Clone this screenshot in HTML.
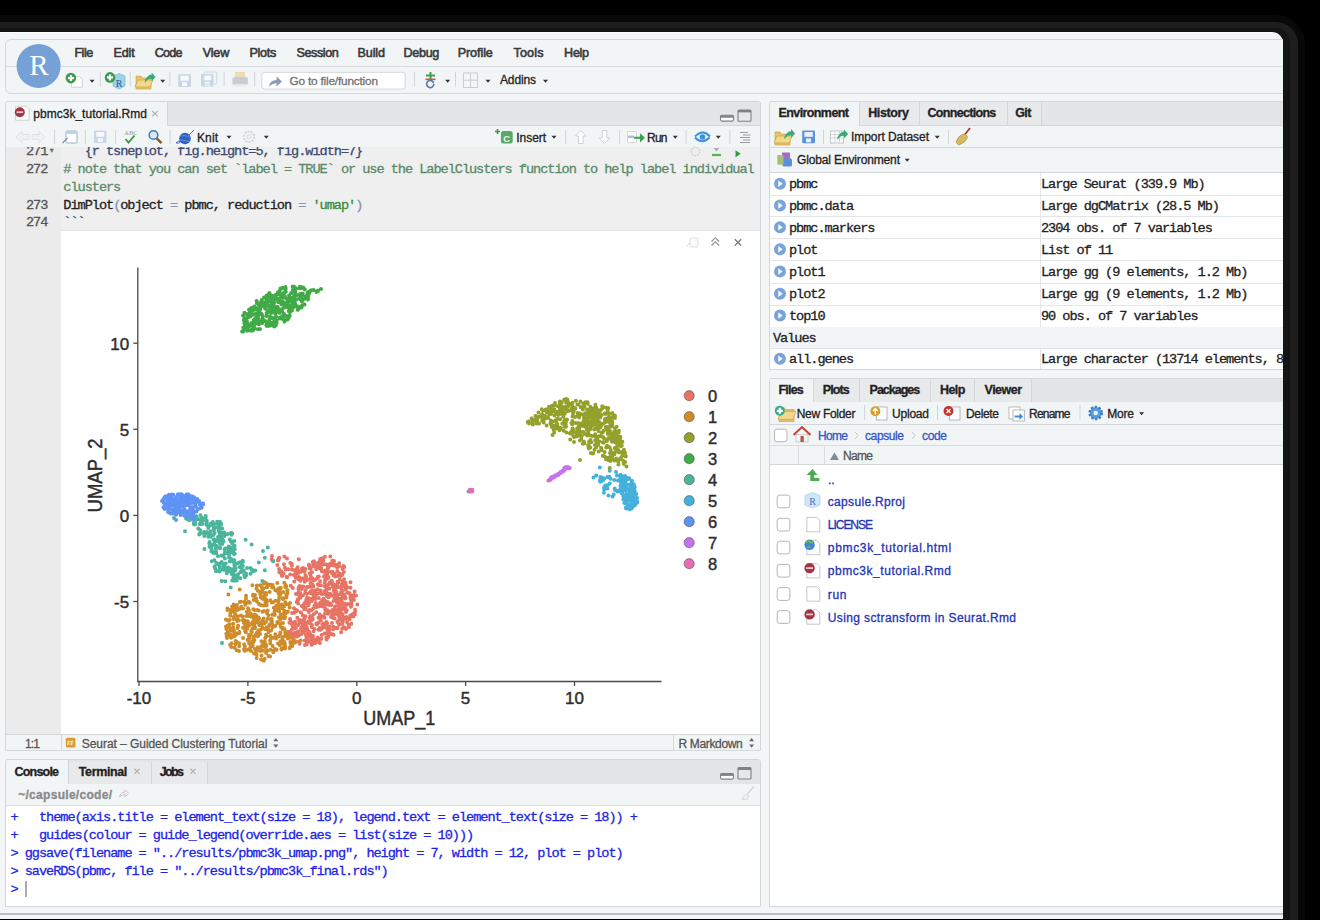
<!DOCTYPE html><html><head><meta charset="utf-8"><style>
html,body{margin:0;padding:0;}
body{width:1320px;height:920px;overflow:hidden;background:#000;position:relative;font-family:"Liberation Sans",sans-serif;}
.t{position:absolute;white-space:pre;-webkit-text-stroke:0.3px currentColor;}
.r{position:absolute;}
svg{position:absolute;overflow:visible;}
</style></head><body>
<div class="r" style="left:-40.00px;top:15.00px;width:1345.00px;height:945.00px;background:#080808;border-top-right-radius:30px;"></div>
<div class="r" style="left:-40.00px;top:21.50px;width:1338.00px;height:938.50px;background:#1e1e1e;border-top-right-radius:22px;"></div>
<div class="r" style="left:-40.00px;top:28.00px;width:1330.00px;height:932.00px;background:#141414;border-top-right-radius:15px;"></div>
<div class="r" style="left:0.00px;top:918.50px;width:1283.00px;height:41.50px;background:#000;"></div>
<div class="r" style="left:0.00px;top:32.00px;width:1283.00px;height:886.50px;background:#f3f5f7;border-top-right-radius:11px;"></div>
<div style="position:absolute;left:0;top:0;width:1283px;height:918.5px;overflow:hidden">
<div class="r" style="left:0.00px;top:32.00px;width:1272.00px;height:1.00px;background:#fdfdfd;"></div>
<div class="r" style="left:0.00px;top:913.00px;width:1283.00px;height:2.00px;background:#b7c1cf;"></div>
<div class="r" style="left:5.00px;top:39.00px;width:1295.00px;height:54.50px;background:#f2f5f6;border:1px solid #d3d7da;box-sizing:border-box;border-radius:6px;"></div>
<div class="r" style="left:6.00px;top:66.00px;width:1277.00px;height:1.00px;background:#dadde0;"></div>
<div class="r" style="left:5.00px;top:101.00px;width:756.00px;height:650.00px;background:#f2f5f6;border:1px solid #d3d7da;box-sizing:border-box;border-radius:3px 3px 0 0;"></div>
<div class="r" style="left:6.00px;top:102.00px;width:754.00px;height:23.00px;background:#e3e5e7;border-radius:2px 2px 0 0;"></div>
<div class="r" style="left:6.00px;top:102.00px;width:161.00px;height:24.00px;background:#f2f5f6;border-right:1px solid #d3d7da;border-radius:2px 0 0 0;"></div>
<div class="r" style="left:167.00px;top:125.00px;width:593.00px;height:1.00px;background:#d3d7da;"></div>
<div class="r" style="left:6.00px;top:146.50px;width:754.00px;height:1.00px;background:#d3d7da;"></div>
<div class="r" style="left:6.00px;top:147.00px;width:754.00px;height:587.00px;background:#efefef;"></div>
<div class="r" style="left:6.00px;top:147.00px;width:54.50px;height:587.00px;background:#ebebeb;"></div>
<div class="r" style="left:60.50px;top:229.50px;width:699.50px;height:504.50px;background:#ffffff;border-top:1px solid #e2e2e2;box-sizing:border-box;"></div>
<div class="r" style="left:6.00px;top:734.00px;width:754.00px;height:1.00px;background:#d3d7da;"></div>
<div class="r" style="left:61.00px;top:734.00px;width:1.00px;height:16.00px;background:#d3d7da;"></div>
<div class="r" style="left:673.00px;top:734.00px;width:1.00px;height:16.00px;background:#d3d7da;"></div>
<div class="r" style="left:5.00px;top:759.00px;width:756.00px;height:147.50px;background:#ffffff;border:1px solid #d3d7da;box-sizing:border-box;border-radius:3px 3px 0 0;"></div>
<div class="r" style="left:6.00px;top:760.00px;width:754.00px;height:23.50px;background:#e3e5e7;border-radius:2px 2px 0 0;"></div>
<div class="r" style="left:6.00px;top:760.00px;width:62.00px;height:24.00px;background:#f2f5f6;border-right:1px solid #d3d7da;border-radius:2px 0 0 0;"></div>
<div class="r" style="left:69.00px;top:761.50px;width:81.50px;height:22.00px;background:#e8e9eb;"></div>
<div class="r" style="left:151.50px;top:761.50px;width:55.50px;height:22.00px;background:#e8e9eb;"></div>
<div class="r" style="left:150.50px;top:761.00px;width:1.00px;height:22.50px;background:#d3d7da;"></div>
<div class="r" style="left:207.00px;top:761.00px;width:1.00px;height:22.50px;background:#d3d7da;"></div>
<div class="r" style="left:68.00px;top:783.50px;width:692.00px;height:1.00px;background:#d3d7da;"></div>
<div class="r" style="left:6.00px;top:784.00px;width:754.00px;height:21.00px;background:#f2f5f6;"></div>
<div class="r" style="left:6.00px;top:805.00px;width:754.00px;height:1.00px;background:#dadde0;"></div>
<div class="r" style="left:769.00px;top:101.00px;width:531.00px;height:268.50px;background:#f2f5f6;border:1px solid #d3d7da;box-sizing:border-box;border-radius:3px 3px 0 0;"></div>
<div class="r" style="left:770.00px;top:102.00px;width:520.00px;height:23.00px;background:#e3e5e7;border-radius:2px 2px 0 0;"></div>
<div class="r" style="left:770.00px;top:102.00px;width:88.50px;height:24.00px;background:#f2f5f6;border-right:1px solid #d3d7da;border-radius:2px 0 0 0;"></div>
<div class="r" style="left:859.50px;top:102.00px;width:181.50px;height:23.00px;background:#e8e9eb;"></div>
<div class="r" style="left:918.50px;top:102.00px;width:1.00px;height:23.00px;background:#d3d7da;"></div>
<div class="r" style="left:1006.50px;top:102.00px;width:1.00px;height:23.00px;background:#d3d7da;"></div>
<div class="r" style="left:1041.00px;top:102.00px;width:1.00px;height:23.00px;background:#d3d7da;"></div>
<div class="r" style="left:858.50px;top:125.00px;width:431.50px;height:1.00px;background:#d3d7da;"></div>
<div class="r" style="left:770.00px;top:147.00px;width:520.00px;height:1.00px;background:#d3d7da;"></div>
<div class="r" style="left:770.00px;top:172.00px;width:520.00px;height:1.00px;background:#d3d7da;"></div>
<div class="r" style="left:770.00px;top:173.00px;width:520.00px;height:196.00px;background:#ffffff;"></div>
<div class="r" style="left:770.00px;top:194.50px;width:520.00px;height:1.00px;background:#e3e6e9;"></div>
<div class="r" style="left:770.00px;top:216.40px;width:520.00px;height:1.00px;background:#e3e6e9;"></div>
<div class="r" style="left:770.00px;top:238.30px;width:520.00px;height:1.00px;background:#e3e6e9;"></div>
<div class="r" style="left:770.00px;top:260.20px;width:520.00px;height:1.00px;background:#e3e6e9;"></div>
<div class="r" style="left:770.00px;top:282.90px;width:520.00px;height:1.00px;background:#e3e6e9;"></div>
<div class="r" style="left:770.00px;top:304.50px;width:520.00px;height:1.00px;background:#e3e6e9;"></div>
<div class="r" style="left:770.00px;top:326.70px;width:520.00px;height:1.00px;background:#e3e6e9;"></div>
<div class="r" style="left:770.00px;top:348.40px;width:520.00px;height:1.00px;background:#e3e6e9;"></div>
<div class="r" style="left:770.00px;top:327.20px;width:520.00px;height:21.20px;background:#f1f4f6;"></div>
<div class="r" style="left:1039.50px;top:173.00px;width:1.00px;height:154.00px;background:#e3e6e9;"></div>
<div class="r" style="left:1039.50px;top:349.00px;width:1.00px;height:20.00px;background:#e3e6e9;"></div>
<div class="r" style="left:769.00px;top:378.00px;width:531.00px;height:528.50px;background:#ffffff;border:1px solid #d3d7da;box-sizing:border-box;border-radius:3px 3px 0 0;"></div>
<div class="r" style="left:770.00px;top:379.00px;width:520.00px;height:22.50px;background:#e3e5e7;border-radius:2px 2px 0 0;"></div>
<div class="r" style="left:770.00px;top:379.00px;width:43.00px;height:23.00px;background:#f2f5f6;border-right:1px solid #d3d7da;border-radius:2px 0 0 0;"></div>
<div class="r" style="left:814.00px;top:379.00px;width:217.20px;height:22.50px;background:#e8e9eb;"></div>
<div class="r" style="left:859.40px;top:379.00px;width:1.00px;height:22.50px;background:#d3d7da;"></div>
<div class="r" style="left:929.50px;top:379.00px;width:1.00px;height:22.50px;background:#d3d7da;"></div>
<div class="r" style="left:974.10px;top:379.00px;width:1.00px;height:22.50px;background:#d3d7da;"></div>
<div class="r" style="left:1031.20px;top:379.00px;width:1.00px;height:22.50px;background:#d3d7da;"></div>
<div class="r" style="left:813.00px;top:401.50px;width:477.00px;height:1.00px;background:#d3d7da;"></div>
<div class="r" style="left:770.00px;top:402.00px;width:520.00px;height:62.00px;background:#f2f5f6;"></div>
<div class="r" style="left:770.00px;top:424.00px;width:520.00px;height:1.00px;background:#d3d7da;"></div>
<div class="r" style="left:770.00px;top:445.00px;width:520.00px;height:1.00px;background:#dadde0;"></div>
<div class="r" style="left:770.00px;top:464.00px;width:520.00px;height:1.00px;background:#d3d7da;"></div>
<div class="r" style="left:798.00px;top:445.00px;width:1.00px;height:19.00px;background:#dadde0;"></div>
<div class="r" style="left:823.50px;top:445.00px;width:1.00px;height:19.00px;background:#dadde0;"></div>
</div>
<svg style="left:0;top:0" width="1320" height="920" viewBox="0 0 1320 920"><g fill="none" stroke-linecap="round" stroke-width="4"><path stroke="#e77364" d="M318.8 598.1h0M353.1 599.0h0M352.8 613.9h0M349.3 593.0h0M313.7 631.2h0M302.3 624.2h0M320.4 592.8h0M301.0 628.6h0M339.2 563.2h0M313.8 593.2h0M328.2 636.9h0M354.5 613.3h0M313.1 564.9h0M328.6 596.1h0M312.1 593.5h0M299.3 641.4h0M329.2 604.9h0M317.4 578.0h0M309.5 600.4h0M327.2 574.0h0M311.7 627.0h0M342.7 595.6h0M325.4 604.0h0M334.7 618.4h0M314.2 639.6h0M345.5 582.8h0M333.7 575.6h0M289.4 622.8h0M331.7 580.7h0M318.8 576.4h0M300.3 571.7h0M345.2 596.7h0M338.1 587.0h0M344.6 609.8h0M333.7 591.1h0M327.1 572.5h0M325.0 613.8h0M303.5 632.6h0M349.0 627.0h0M338.3 582.7h0M303.6 619.8h0M308.3 621.5h0M312.0 625.0h0M327.9 630.0h0M325.9 590.7h0M342.0 584.0h0M301.9 627.1h0M326.3 624.5h0M321.9 558.4h0M342.1 575.1h0M305.5 616.2h0M341.6 613.6h0M318.6 622.4h0M334.8 574.0h0M325.2 610.0h0M339.0 573.2h0M309.2 586.6h0M339.1 608.1h0M299.3 622.3h0M295.3 624.1h0M305.0 602.4h0M306.3 636.3h0M340.5 619.0h0M327.1 578.5h0M309.9 573.3h0M317.7 637.6h0M288.7 631.9h0M313.2 566.0h0M299.8 578.0h0M328.3 596.0h0M308.8 603.4h0M342.3 621.6h0M311.5 639.5h0M343.5 606.7h0M321.0 585.3h0M296.6 636.5h0M330.4 564.1h0M304.0 604.3h0M346.6 587.3h0M322.6 616.2h0M300.7 612.6h0M300.4 620.4h0M324.7 571.0h0M331.5 634.2h0M341.6 598.3h0M315.4 643.1h0M311.6 643.9h0M295.4 633.1h0M342.3 623.9h0M329.9 564.2h0M342.9 621.5h0M309.7 618.0h0M316.3 624.1h0M314.4 628.9h0M320.7 629.7h0M308.5 605.2h0M292.7 634.0h0M335.4 594.1h0M337.3 621.9h0M330.3 556.5h0M353.0 595.3h0M329.5 630.0h0M302.0 568.5h0M351.1 616.2h0M328.6 567.1h0M316.5 642.1h0M294.5 642.7h0M347.1 622.3h0M290.0 619.0h0M322.2 600.2h0M297.4 602.1h0M344.3 567.1h0M349.6 593.6h0M306.0 577.0h0M319.8 614.6h0M327.7 636.9h0M323.5 602.2h0M309.4 566.4h0M352.7 599.6h0M349.7 619.2h0M339.1 624.8h0M308.5 622.1h0M301.7 606.0h0M329.5 626.4h0M299.0 586.7h0M345.9 629.0h0M338.7 623.6h0M333.3 626.7h0M323.8 606.7h0M352.8 614.6h0M333.8 609.2h0M322.3 624.6h0M327.9 566.9h0M317.4 593.8h0M317.9 606.6h0M312.8 591.0h0M317.5 589.2h0M315.2 596.3h0M329.3 588.8h0M307.4 597.8h0M304.2 578.4h0M336.9 628.3h0M320.5 590.6h0M303.7 628.4h0M295.2 609.6h0M319.8 568.4h0M291.3 622.3h0M291.9 629.4h0M334.5 598.6h0M331.0 564.2h0M329.0 593.7h0M304.8 640.4h0M339.1 566.2h0M303.3 586.5h0M327.9 584.9h0M318.4 629.8h0M300.0 621.3h0M310.6 641.9h0M330.3 565.2h0M316.3 612.3h0M332.6 586.5h0M327.0 570.7h0M308.9 611.9h0M351.3 602.4h0M305.2 608.9h0M306.7 627.0h0M298.1 579.1h0M318.3 638.5h0M298.8 572.7h0M310.7 591.3h0M341.2 592.1h0M320.9 591.5h0M317.4 639.8h0M304.9 645.0h0M324.5 617.7h0M314.2 580.0h0M296.6 636.5h0M312.7 619.3h0M319.9 603.5h0M301.8 571.3h0M311.0 617.7h0M337.7 594.8h0M302.1 630.7h0M326.3 585.1h0M304.7 581.8h0M307.0 586.9h0M343.5 627.5h0M333.7 565.4h0M305.4 603.6h0M345.7 608.9h0M317.7 577.3h0M333.6 587.8h0M350.5 582.3h0M332.9 617.7h0M307.1 580.1h0M312.0 572.2h0M318.1 640.6h0M304.7 570.1h0M331.9 615.4h0M323.5 571.5h0M299.4 577.2h0M323.7 598.8h0M326.5 621.9h0M350.8 598.1h0M290.0 631.4h0M297.2 610.4h0M342.8 566.9h0M308.0 633.3h0M336.2 565.0h0M336.0 628.1h0M316.2 569.3h0M334.1 584.4h0M315.7 566.7h0M314.5 605.7h0M326.4 592.1h0M310.5 640.9h0M341.6 604.3h0M343.2 607.7h0M294.0 635.5h0M310.0 592.5h0M325.4 564.3h0M337.4 628.2h0M309.7 568.4h0M341.4 618.8h0M313.5 586.6h0M298.0 631.5h0M319.9 629.7h0M311.3 584.5h0M323.6 623.6h0M350.0 587.5h0M336.5 592.1h0M348.5 624.9h0M326.6 588.4h0M306.5 636.4h0M344.2 583.1h0M344.8 603.7h0M326.6 604.6h0M316.3 606.3h0M293.4 639.6h0M335.0 614.0h0M344.6 618.7h0M342.6 569.0h0M324.9 625.9h0M298.2 603.5h0M351.3 623.8h0M315.4 599.1h0M306.8 643.4h0M342.9 617.6h0M308.7 622.3h0M321.8 628.4h0M313.0 636.1h0M335.9 596.5h0M327.2 629.0h0M338.0 600.0h0M311.1 620.7h0M345.8 589.3h0M310.0 579.0h0M319.0 562.2h0M326.9 595.9h0M309.0 610.5h0M311.8 644.7h0M296.0 593.9h0M324.7 582.7h0M335.1 606.6h0M329.7 582.6h0M339.5 618.4h0M338.0 598.3h0M320.1 581.3h0M331.0 572.1h0M321.9 571.2h0M306.4 622.9h0M311.9 610.0h0M295.0 632.6h0M311.1 638.6h0M310.5 583.1h0M299.6 643.8h0M329.1 631.0h0M327.0 588.2h0M305.3 630.5h0M313.2 608.5h0M303.9 620.2h0M333.6 563.7h0M336.7 587.1h0M319.8 628.1h0M325.0 580.3h0M339.1 616.6h0M347.2 592.6h0M326.9 633.1h0M301.2 634.0h0M328.0 568.5h0M352.8 595.4h0M300.2 592.9h0M329.2 594.5h0M337.9 567.1h0M305.2 629.3h0M340.9 610.1h0M317.8 576.8h0M336.6 564.9h0M302.9 595.4h0M309.6 598.7h0M298.6 592.0h0M337.0 584.8h0M343.9 572.0h0M294.2 612.7h0M319.3 639.5h0M294.5 623.7h0M334.8 589.1h0M296.2 611.3h0M341.1 598.5h0M320.7 618.1h0M330.5 593.9h0M300.3 597.7h0M326.3 637.5h0M310.5 575.5h0M332.0 622.9h0M304.7 618.5h0M354.0 595.2h0M333.6 634.7h0M301.5 586.8h0M308.9 598.8h0M340.2 613.0h0M353.4 616.6h0M332.2 573.6h0M348.1 593.1h0M331.3 604.9h0M305.8 626.7h0M309.9 636.2h0M322.7 558.4h0M308.4 611.1h0M342.6 590.9h0M324.4 593.7h0M339.5 619.4h0M346.3 616.9h0M332.0 583.8h0M306.1 639.7h0M325.0 556.8h0M311.3 587.1h0M295.0 621.8h0M344.8 627.6h0M343.5 566.1h0M323.9 576.6h0M342.1 628.7h0M340.6 575.8h0M310.2 586.4h0M318.1 566.8h0M337.1 602.9h0M341.8 586.0h0M316.5 623.5h0M309.1 633.0h0M339.6 607.7h0M316.1 607.2h0M309.2 566.3h0M290.5 620.9h0M339.2 611.7h0M301.7 621.4h0M346.0 612.0h0M303.2 606.9h0M315.2 579.7h0M297.6 634.6h0M299.3 579.3h0M323.4 560.4h0M308.6 604.7h0M321.4 638.7h0M328.2 613.7h0M328.8 627.3h0M302.9 615.5h0M305.5 590.2h0M305.6 577.4h0M310.2 593.1h0M312.7 584.8h0M288.4 632.0h0M339.7 600.3h0M351.3 597.1h0M301.7 630.4h0M322.8 606.6h0M331.1 617.0h0M331.9 612.1h0M314.0 561.3h0M288.2 632.1h0M292.4 625.8h0M299.3 586.9h0M301.3 634.1h0M314.2 641.1h0M305.6 607.8h0M335.1 576.5h0M314.3 564.2h0M343.9 572.0h0M332.7 613.6h0M324.5 633.5h0M340.7 574.3h0M325.2 570.6h0M304.3 568.5h0M350.3 615.4h0M329.2 603.7h0M327.4 610.3h0M292.7 626.1h0M304.2 609.2h0M324.8 586.3h0M354.6 591.4h0M317.2 604.7h0M341.9 604.6h0M338.2 613.7h0M341.3 574.9h0M327.6 595.4h0M303.5 626.9h0M302.8 620.3h0M321.9 594.3h0M337.5 621.7h0M344.1 579.3h0M334.8 600.6h0M354.1 596.1h0M320.6 604.0h0M309.0 564.7h0M321.6 561.5h0M299.3 595.8h0M311.9 601.0h0M324.9 590.7h0M307.1 587.4h0M309.8 623.3h0M322.2 628.2h0M301.7 588.9h0M315.5 590.5h0M356.0 595.4h0M332.8 609.7h0M346.1 585.8h0M325.2 608.6h0M291.8 623.5h0M313.7 614.2h0M307.3 639.5h0M313.3 580.4h0M306.3 599.8h0M302.0 628.2h0M342.9 620.6h0M350.5 587.8h0M345.1 598.4h0M350.6 599.0h0M305.4 568.9h0M322.4 559.6h0M298.7 635.5h0M328.0 634.4h0M297.8 599.2h0M320.5 564.9h0M305.8 639.8h0M338.7 601.8h0M330.5 634.2h0M355.1 609.7h0M290.6 635.2h0M298.8 577.1h0M296.8 602.1h0M328.6 597.3h0M320.6 568.0h0M338.3 604.5h0M309.1 631.7h0M314.7 596.4h0M305.3 623.4h0M350.5 596.5h0M324.0 627.3h0M300.3 580.7h0M330.6 563.7h0M340.6 594.0h0M323.8 604.6h0M294.0 608.3h0M318.8 585.1h0M346.3 618.6h0M295.9 627.9h0M341.4 598.5h0M296.3 611.2h0M331.6 633.9h0M305.9 634.7h0M295.0 627.9h0M351.0 606.7h0M330.3 611.5h0M342.1 602.6h0M333.6 562.3h0M343.9 605.3h0M312.5 643.7h0M328.5 577.0h0M327.4 633.7h0M313.3 595.0h0M332.6 571.7h0M328.6 584.6h0M320.8 620.6h0M309.4 610.1h0M345.6 598.0h0M332.0 581.6h0M305.3 601.9h0M325.0 575.5h0M341.6 601.0h0M312.4 578.3h0M292.1 613.1h0M288.8 633.8h0M335.5 586.0h0M318.5 617.8h0M298.4 588.6h0M343.2 617.6h0M328.8 564.5h0M302.5 578.6h0M326.6 639.5h0M320.5 602.6h0M307.1 597.7h0M353.9 599.9h0M301.1 612.4h0M323.4 598.8h0M337.0 609.9h0M333.6 601.0h0M346.7 610.4h0M351.6 605.1h0M298.7 620.0h0M333.1 629.3h0M344.9 586.4h0M297.3 634.6h0M355.1 611.8h0M328.1 571.7h0M310.7 568.7h0M320.1 559.3h0M333.9 614.5h0M292.4 634.9h0M322.1 562.5h0M337.3 570.9h0M357.3 604.6h0M351.4 600.3h0M310.3 615.9h0M337.7 597.3h0M306.7 593.7h0M338.0 576.0h0M298.3 599.5h0M334.0 561.1h0M306.4 644.4h0M306.1 626.0h0M321.7 635.0h0M337.2 612.1h0M321.4 616.2h0M324.3 571.8h0M336.7 566.9h0M309.1 633.3h0M327.6 602.0h0M337.7 600.3h0M314.4 605.8h0M351.8 615.1h0M298.3 633.7h0M307.2 629.0h0M333.5 610.7h0M339.9 579.6h0M346.6 604.9h0M341.1 632.3h0M305.2 592.8h0M312.8 562.1h0M349.5 618.1h0M322.0 605.2h0M312.6 618.1h0M325.2 600.8h0M305.5 575.5h0M334.9 586.4h0M323.7 564.6h0M312.7 561.9h0M341.4 588.5h0M306.7 640.7h0M290.8 632.7h0M354.9 614.4h0M314.8 594.1h0M330.4 603.5h0M342.6 614.6h0M333.8 561.8h0M292.4 637.7h0M313.0 598.5h0M332.3 560.7h0M327.1 623.0h0M298.2 624.9h0M338.2 605.4h0M331.9 616.5h0M299.7 586.1h0M310.2 634.0h0M342.8 581.7h0M312.6 590.7h0M348.0 604.0h0M332.0 595.5h0M319.9 643.1h0M306.8 603.3h0M321.2 568.0h0M297.4 601.6h0M344.0 594.8h0M296.8 636.4h0M317.1 624.5h0M318.1 593.5h0M315.7 602.9h0M307.0 642.7h0M326.2 587.3h0M335.3 588.5h0M317.9 584.2h0M325.1 580.8h0M334.8 592.9h0M337.6 581.8h0M319.6 606.3h0M338.3 615.0h0M317.6 562.9h0M300.1 571.9h0M334.3 586.4h0M304.5 571.8h0M297.3 617.8h0M328.3 578.1h0M548.5 480.5h0M287.1 577.2h0M295.8 570.5h0M285.0 567.7h0M290.3 562.9h0M278.8 557.9h0M297.0 573.2h0M294.4 570.3h0M287.0 558.6h0M291.7 563.8h0M292.7 588.0h0M282.0 575.9h0M291.9 565.8h0M290.7 585.7h0M278.5 560.2h0M272.0 556.0h0M297.8 572.7h0M292.0 569.6h0M284.0 564.2h0M302.8 568.0h0M293.8 575.0h0M298.8 559.3h0M271.6 559.3h0M295.7 577.4h0M279.1 569.1h0M294.3 581.4h0M296.8 568.7h0M295.7 574.4h0M279.4 558.1h0M286.4 576.7h0M290.1 574.4h0M288.4 569.3h0M284.3 556.6h0M283.6 573.4h0M298.5 570.8h0M285.7 569.6h0M279.3 572.2h0M297.7 567.3h0M296.0 572.6h0M281.8 574.7h0M273.2 561.0h0M281.1 573.3h0M277.4 565.0h0M291.7 565.2h0M277.8 560.2h0M281.6 571.5h0"/><path stroke="#cf8c2a" d="M284.8 644.3h0M245.9 632.2h0M254.0 620.2h0M266.9 636.2h0M236.7 650.3h0M236.1 606.9h0M286.3 594.3h0M233.0 610.6h0M229.7 620.0h0M251.6 642.1h0M263.8 660.8h0M269.8 624.6h0M236.9 607.5h0M273.9 607.8h0M275.4 600.7h0M280.8 614.6h0M282.9 629.3h0M234.4 605.9h0M275.4 626.1h0M282.3 608.2h0M262.5 620.4h0M285.2 587.0h0M265.3 602.5h0M271.8 602.5h0M296.1 641.8h0M245.1 626.8h0M275.3 590.3h0M266.0 621.9h0M278.6 604.9h0M289.6 637.8h0M261.5 655.6h0M284.0 636.4h0M256.1 622.3h0M265.1 598.8h0M244.5 650.8h0M293.3 638.7h0M280.1 623.2h0M270.5 636.1h0M261.7 587.4h0M244.0 649.2h0M253.7 618.2h0M279.5 590.1h0M279.3 596.9h0M282.0 607.3h0M266.6 587.3h0M292.2 646.1h0M271.1 638.1h0M249.8 642.2h0M269.7 592.1h0M242.8 620.3h0M260.2 592.1h0M285.2 646.7h0M249.0 625.8h0M248.5 615.9h0M249.0 634.9h0M283.0 622.9h0M272.6 646.0h0M287.5 636.7h0M227.9 620.6h0M245.1 631.3h0M255.8 618.7h0M267.6 629.7h0M264.6 582.3h0M243.9 620.1h0M279.6 593.8h0M233.0 608.3h0M231.3 647.1h0M277.0 605.8h0M285.6 584.9h0M230.6 634.5h0M234.9 636.1h0M278.8 600.1h0M262.4 598.5h0M280.3 632.4h0M271.9 621.7h0M245.9 623.7h0M266.1 653.0h0M282.7 598.3h0M265.1 629.2h0M271.0 619.0h0M265.2 637.9h0M288.1 637.2h0M248.9 610.3h0M263.7 605.4h0M253.7 638.9h0M254.0 653.6h0M289.7 607.5h0M234.7 647.7h0M257.4 610.0h0M261.4 641.2h0M286.6 595.5h0M239.4 609.1h0M237.5 620.4h0M233.7 635.0h0M257.0 601.4h0M279.9 608.1h0M247.2 602.8h0M280.8 593.1h0M268.4 585.3h0M246.3 616.0h0M272.1 587.4h0M290.5 643.0h0M226.0 626.6h0M288.6 604.6h0M234.4 612.5h0M283.0 622.9h0M286.4 597.4h0M246.0 598.5h0M293.7 639.2h0M235.6 641.0h0M225.9 619.6h0M244.1 644.2h0M282.6 637.6h0M276.1 638.4h0M266.0 634.8h0M265.7 644.6h0M263.6 583.7h0M268.3 615.2h0M250.7 613.6h0M241.1 606.8h0M260.8 650.9h0M233.2 623.7h0M284.8 645.6h0M255.0 594.9h0M277.2 609.6h0M232.1 628.2h0M256.5 654.6h0M278.0 643.5h0M270.2 643.3h0M271.1 630.4h0M281.5 641.1h0M278.3 602.1h0M263.3 644.5h0M230.1 645.1h0M267.3 587.1h0M257.6 636.2h0M265.2 646.8h0M241.0 615.6h0M258.3 635.4h0M247.7 624.5h0M266.5 583.5h0M231.9 637.0h0M256.5 588.6h0M262.6 611.8h0M287.6 590.3h0M267.7 610.6h0M273.1 602.2h0M259.1 624.6h0M254.3 627.7h0M230.2 615.8h0M264.9 643.3h0M290.4 641.9h0M254.5 639.9h0M239.3 632.0h0M237.3 610.1h0M284.3 582.7h0M274.0 650.5h0M287.8 634.6h0M287.5 593.3h0M229.6 624.3h0M273.3 637.8h0M237.6 628.0h0M278.8 617.4h0M257.6 619.7h0M282.0 618.1h0M243.0 627.7h0M248.7 649.5h0M226.3 633.7h0M251.0 615.7h0M266.6 627.6h0M239.2 646.3h0M263.2 644.0h0M280.7 626.4h0M233.6 619.0h0M234.0 617.0h0M227.7 631.2h0M271.2 621.3h0M252.0 624.3h0M251.1 650.9h0M290.3 646.7h0M263.7 622.3h0M263.7 618.5h0M256.6 622.0h0M231.5 643.3h0M266.0 594.9h0M238.8 620.5h0M244.9 646.4h0M231.2 636.7h0M263.0 599.0h0M284.0 628.6h0M233.6 604.6h0M239.9 602.0h0M238.7 633.0h0M272.3 623.9h0M248.9 636.3h0M263.2 592.5h0M285.0 616.7h0M284.9 630.3h0M284.7 618.3h0M233.1 627.2h0M244.8 602.7h0M285.1 648.6h0M259.1 618.3h0M258.7 610.6h0M247.6 639.8h0M279.8 645.2h0M282.7 607.5h0M258.9 603.7h0M254.2 624.7h0M266.7 605.3h0M227.7 633.2h0M282.5 638.5h0M255.8 651.9h0M266.3 599.8h0M277.4 623.0h0M267.6 650.5h0M285.7 613.3h0M266.4 645.7h0M227.5 625.6h0M270.1 640.4h0M251.2 631.1h0M284.1 612.6h0M253.5 624.5h0M263.1 650.4h0M245.2 604.7h0M255.4 634.9h0M264.7 641.4h0M254.9 628.3h0M271.7 619.0h0M250.8 634.7h0M237.2 621.1h0M245.3 627.7h0M280.1 623.8h0M285.3 632.5h0M229.7 635.3h0M263.1 643.8h0M260.6 622.2h0M253.8 600.0h0M280.4 632.9h0M247.2 628.8h0M259.8 604.5h0M232.1 606.6h0M233.9 616.7h0M253.0 641.2h0M257.8 634.2h0M233.7 631.5h0M286.3 586.6h0M284.1 646.7h0M274.5 611.3h0M250.1 648.1h0M258.4 617.6h0M248.6 640.9h0M257.9 647.3h0M281.5 649.4h0M267.0 613.1h0M252.7 645.8h0M278.8 636.6h0M263.4 588.6h0M292.0 644.0h0M262.5 627.5h0M262.4 621.1h0M284.1 641.8h0M250.6 645.2h0M254.0 636.7h0M254.5 610.1h0M258.8 631.0h0M282.7 643.3h0M257.8 590.8h0M282.9 599.0h0M264.3 623.5h0M253.1 621.5h0M287.0 612.5h0M272.5 627.6h0M284.4 605.9h0M279.2 611.6h0M276.6 649.7h0M253.0 615.7h0M253.3 609.3h0M257.1 651.1h0M276.3 605.8h0M254.6 622.3h0M241.0 601.7h0M260.0 633.9h0M252.5 628.6h0M238.1 625.8h0M249.8 602.7h0M284.4 610.8h0M284.6 643.0h0M271.1 637.7h0M268.5 656.0h0M274.1 614.7h0M274.7 615.1h0M270.6 649.7h0M248.6 601.8h0M245.0 624.7h0M246.8 611.8h0M276.1 610.3h0M278.6 593.4h0M226.4 628.9h0M283.1 592.1h0M226.7 636.3h0M280.3 594.3h0M256.9 585.6h0M230.0 610.1h0M285.5 633.7h0M271.4 623.3h0M277.4 622.1h0M255.9 650.2h0M247.8 614.6h0M251.4 616.8h0M256.2 598.4h0M252.3 646.3h0M238.4 620.5h0M246.4 628.8h0M287.2 590.6h0M263.3 596.5h0M276.6 637.1h0M248.0 608.2h0M260.8 597.6h0M261.1 659.6h0M230.3 613.6h0M239.0 650.9h0M247.8 621.3h0M227.0 638.1h0M265.6 647.2h0M282.9 642.5h0M244.6 601.7h0M272.6 585.1h0M300.8 640.6h0M263.9 610.9h0M229.2 626.9h0M287.2 590.7h0M231.0 637.7h0M261.9 646.5h0M267.4 629.5h0M260.3 648.6h0M281.5 648.7h0M243.8 622.8h0M268.0 629.3h0M260.1 594.1h0M284.4 642.2h0M227.4 608.6h0M236.4 633.6h0M267.8 618.7h0M266.8 602.0h0M235.3 614.1h0M236.6 619.3h0M236.3 641.8h0M229.7 634.8h0M259.1 623.3h0M280.3 616.9h0M231.5 611.2h0M246.4 650.0h0M280.4 641.2h0M277.3 582.9h0M280.1 644.0h0M228.3 626.0h0M283.9 616.4h0M237.9 616.3h0M273.3 652.2h0M280.0 634.5h0M289.7 648.2h0M274.9 648.9h0M278.3 588.8h0M236.8 634.0h0M246.0 621.2h0M264.7 658.7h0M283.0 628.1h0M277.0 590.7h0M276.3 609.7h0M255.0 649.0h0M292.8 642.8h0M259.9 625.3h0M273.4 587.5h0M232.5 635.5h0M239.1 643.3h0M280.0 594.7h0M280.8 587.9h0M253.8 639.2h0M253.2 594.8h0M260.7 592.7h0M262.3 589.2h0M283.3 598.6h0M275.3 634.2h0M239.3 632.9h0M268.5 631.9h0M238.1 620.4h0M243.0 608.6h0M262.6 623.4h0M260.7 605.1h0M260.4 585.3h0M286.1 597.3h0M249.2 624.1h0M270.0 584.6h0M233.9 636.6h0M269.0 630.3h0M232.6 608.8h0M253.5 642.0h0M287.9 638.4h0M237.8 619.2h0M251.8 631.9h0M280.3 619.2h0M266.8 650.5h0M230.7 630.5h0M249.1 643.5h0M282.3 615.4h0M235.4 644.2h0M281.1 627.6h0M243.1 638.0h0M290.0 603.0h0M287.9 611.6h0M260.9 629.6h0M266.1 593.0h0M236.9 605.1h0M226.7 628.1h0M274.4 613.7h0M279.7 588.1h0M234.0 630.3h0M254.2 636.6h0M286.3 604.0h0M250.1 624.3h0M272.2 614.7h0M254.5 614.6h0M282.4 617.6h0M258.4 630.6h0M285.3 602.2h0M256.3 615.4h0M281.8 604.6h0M252.3 622.7h0M242.5 616.5h0M227.4 609.9h0M270.3 600.2h0M255.0 627.3h0M253.1 596.1h0M268.9 626.1h0M256.9 632.8h0M285.6 613.2h0M249.7 638.1h0M270.1 656.5h0M236.1 609.4h0M261.6 646.1h0M239.7 589.5h0M228.4 594.4h0M246.0 595.8h0M252.4 585.2h0M256.6 658.0h0"/><path stroke="#93a02a" d="M576.4 432.4h0M574.0 437.0h0M564.6 426.7h0M591.2 442.3h0M578.3 431.4h0M599.4 441.5h0M563.7 430.7h0M610.4 417.6h0M610.5 425.6h0M577.6 416.1h0M592.9 453.5h0M560.1 419.3h0M590.9 453.0h0M616.4 435.8h0M620.0 440.3h0M593.3 453.3h0M618.8 440.5h0M589.1 441.6h0M597.2 439.4h0M595.6 411.8h0M594.2 429.5h0M593.1 423.1h0M610.0 453.1h0M583.6 415.1h0M557.2 426.9h0M558.8 427.5h0M608.7 437.9h0M568.4 403.8h0M591.9 411.8h0M599.5 413.9h0M601.0 410.0h0M590.3 447.6h0M575.9 400.8h0M590.4 426.6h0M622.4 453.0h0M584.0 417.6h0M625.7 456.4h0M587.5 418.7h0M608.5 416.9h0M609.3 460.4h0M608.9 458.9h0M584.5 416.2h0M612.9 454.6h0M561.7 402.6h0M588.1 445.3h0M573.7 411.4h0M606.9 429.6h0M604.9 413.3h0M616.3 434.1h0M545.7 410.3h0M606.4 407.7h0M587.1 421.3h0M614.4 431.5h0M584.1 415.3h0M605.6 427.2h0M622.6 451.7h0M546.9 409.5h0M587.2 425.1h0M594.5 424.8h0M572.0 408.0h0M552.5 421.8h0M618.1 461.6h0M606.3 447.6h0M595.2 418.0h0M537.2 419.8h0M552.6 405.4h0M575.4 408.6h0M550.7 406.8h0M599.3 410.5h0M614.5 460.5h0M612.0 441.7h0M572.4 421.0h0M610.0 430.9h0M590.3 406.8h0M598.9 436.3h0M553.5 426.1h0M542.3 416.0h0M611.7 420.6h0M594.3 411.7h0M575.0 417.1h0M552.7 411.0h0M536.4 417.3h0M600.2 417.6h0M608.4 421.0h0M611.0 434.4h0M584.5 406.4h0M598.7 410.7h0M588.3 432.2h0M554.3 411.3h0M588.7 447.5h0M608.9 438.5h0M600.9 425.9h0M608.8 420.6h0M612.0 458.7h0M618.9 430.8h0M615.0 415.7h0M563.8 408.3h0M571.7 433.6h0M609.4 458.8h0M578.6 434.7h0M597.4 410.5h0M585.0 434.1h0M614.8 448.1h0M576.6 432.6h0M554.9 405.3h0M567.7 406.4h0M602.3 408.3h0M566.0 426.8h0M611.7 434.3h0M605.4 420.9h0M550.9 420.6h0M609.2 457.5h0M623.7 463.8h0M551.8 426.9h0M590.7 422.7h0M580.4 401.5h0M570.5 432.8h0M624.9 452.4h0M621.6 442.1h0M608.6 460.2h0M591.6 415.6h0M595.4 416.2h0M589.6 414.5h0M579.3 427.7h0M553.7 430.1h0M580.7 407.2h0M556.3 425.8h0M555.8 414.0h0M611.7 440.4h0M584.4 443.3h0M573.3 436.0h0M588.7 430.3h0M558.0 413.9h0M527.7 421.9h0M583.0 431.9h0M614.9 428.2h0M532.8 424.4h0M623.9 449.7h0M542.2 420.8h0M609.9 433.8h0M601.5 450.0h0M603.6 430.7h0M606.2 447.5h0M604.2 438.7h0M584.6 426.6h0M606.0 459.3h0M588.1 423.8h0M572.4 429.5h0M599.9 417.6h0M565.5 419.7h0M606.4 457.7h0M577.2 428.5h0M545.2 418.4h0M585.5 402.8h0M612.1 456.8h0M583.8 432.3h0M619.9 452.2h0M579.0 433.7h0M596.1 424.5h0M595.2 434.3h0M536.5 423.5h0M543.8 419.4h0M625.8 456.0h0M578.5 404.5h0M617.3 446.2h0M616.6 426.8h0M542.4 417.4h0M578.4 432.9h0M545.6 409.6h0M590.5 439.9h0M612.0 438.7h0M594.3 410.7h0M577.0 436.3h0M584.8 426.1h0M604.7 419.7h0M599.1 422.0h0M543.7 415.7h0M585.6 421.6h0M572.2 424.3h0M621.0 458.0h0M609.3 418.4h0M551.2 424.6h0M599.4 412.4h0M551.2 409.0h0M562.9 409.9h0M583.5 404.8h0M580.7 424.3h0M567.4 401.2h0M562.2 414.1h0M545.9 416.9h0M593.9 421.1h0M535.9 415.9h0M608.2 408.0h0M577.7 412.9h0M572.4 405.9h0M598.2 415.3h0M617.8 438.8h0M563.9 414.2h0M588.2 411.8h0M578.6 435.6h0M584.1 418.9h0M566.1 402.7h0M558.1 412.8h0M555.2 425.5h0M618.8 452.3h0M616.1 458.5h0M539.9 416.4h0M593.9 421.8h0M597.5 414.4h0M612.4 421.9h0M590.3 409.6h0M601.0 447.8h0M542.9 410.8h0M557.3 423.9h0M591.3 409.4h0M611.7 437.6h0M599.2 414.8h0M611.2 452.4h0M613.2 440.2h0M597.0 424.8h0M555.0 403.0h0M620.9 446.3h0M590.3 429.1h0M570.0 433.4h0M581.7 414.5h0M532.5 422.3h0M568.3 411.0h0M558.0 406.3h0M598.3 444.8h0M550.6 413.9h0M578.8 428.5h0M587.3 429.7h0M604.3 456.3h0M538.1 417.3h0M563.1 411.4h0M572.0 404.6h0M559.4 430.2h0M563.3 408.6h0M570.6 410.2h0M619.8 442.9h0M592.7 414.6h0M551.5 406.5h0M611.7 417.8h0M610.8 449.9h0M559.7 409.8h0M610.3 419.6h0M584.0 441.7h0M609.7 447.3h0M618.4 464.5h0M576.7 432.5h0M542.5 418.1h0M585.5 402.3h0M596.3 408.3h0M571.1 410.2h0M611.8 458.1h0M606.4 427.1h0M578.7 426.8h0M560.9 428.1h0M556.5 428.4h0M583.7 421.6h0M559.4 429.7h0M625.1 461.9h0M595.2 440.4h0M592.2 418.1h0M595.4 428.7h0M583.8 425.0h0M616.8 436.0h0M580.4 414.6h0M576.2 436.4h0M586.2 402.3h0M567.9 401.8h0M566.3 408.8h0M550.5 423.3h0M548.1 418.1h0M598.3 427.2h0M616.7 441.2h0M615.0 437.0h0M619.6 459.2h0M539.0 423.4h0M587.8 403.7h0M595.0 414.8h0M611.6 438.4h0M565.2 406.9h0M615.4 435.3h0M561.3 407.4h0M595.5 424.8h0M574.8 407.9h0M612.3 424.8h0M615.1 440.5h0M534.2 420.2h0M543.7 422.5h0M565.9 422.0h0M594.6 416.1h0M554.2 432.5h0M615.0 452.2h0M590.8 442.2h0M563.3 416.8h0M607.2 459.3h0M621.8 445.6h0M601.6 433.1h0M591.0 421.7h0M582.4 425.7h0M532.6 420.8h0M575.4 422.9h0M551.2 413.4h0M561.9 406.3h0M572.5 428.6h0M584.2 418.3h0M557.1 418.7h0M600.3 436.2h0M620.0 438.5h0M543.2 415.8h0M598.0 412.2h0M567.1 410.9h0M592.3 410.7h0M587.5 402.2h0M608.7 459.5h0M561.1 406.3h0M615.4 442.6h0M592.4 425.7h0M595.4 420.8h0M587.2 415.0h0M620.4 437.1h0M588.8 448.6h0M559.9 403.2h0M609.1 427.0h0M581.2 438.9h0M582.8 443.8h0M587.6 420.3h0M601.7 415.1h0M598.7 451.5h0M605.3 418.8h0M572.5 416.5h0M605.1 422.6h0M582.9 409.6h0M541.7 409.3h0M605.5 414.0h0M591.1 421.3h0M607.8 429.6h0M622.4 441.7h0M549.2 414.6h0M553.1 427.7h0M550.0 411.1h0M603.6 442.8h0M614.7 415.7h0M602.8 455.7h0M555.2 420.4h0M587.2 429.1h0M577.7 413.2h0M570.2 404.1h0M577.3 404.6h0M616.1 449.2h0M554.2 409.3h0M596.3 443.5h0M581.7 436.0h0M615.2 448.2h0M567.0 419.4h0M565.8 424.2h0M568.1 406.8h0M564.8 413.8h0M612.1 452.9h0M597.0 419.9h0M592.1 436.0h0M613.1 433.2h0M601.9 423.8h0M598.8 424.8h0M579.9 440.6h0M595.2 419.7h0M590.3 435.6h0M579.5 430.8h0M549.0 406.7h0M579.7 434.5h0M609.1 413.7h0M610.5 460.9h0M542.1 414.6h0M536.9 422.2h0M608.0 434.0h0M572.5 402.8h0M597.0 428.9h0M603.5 407.3h0M595.5 422.9h0M579.4 413.6h0M564.1 421.0h0M599.4 416.3h0M559.4 413.9h0M606.9 441.0h0M564.2 399.7h0M571.4 422.9h0M598.8 417.8h0M608.8 421.9h0M559.9 401.6h0M603.2 423.8h0M579.9 432.3h0M618.0 451.0h0M573.4 429.8h0M611.7 426.4h0M571.1 431.9h0M594.5 449.8h0M567.3 399.4h0M595.5 436.4h0M604.6 451.9h0M538.5 412.4h0M603.0 437.1h0M598.7 431.3h0M554.4 415.4h0M558.3 414.9h0M613.7 436.5h0M578.4 426.8h0M531.7 418.4h0M614.5 454.2h0M613.4 415.0h0M581.0 423.4h0M573.6 431.7h0M585.8 422.8h0M607.8 410.9h0M619.8 436.5h0M531.7 419.1h0M580.6 425.9h0M583.8 419.8h0M607.9 439.1h0M587.0 409.5h0M620.1 436.9h0M607.8 432.4h0M594.9 445.1h0M556.4 411.7h0M596.1 407.6h0M556.3 413.3h0M585.6 419.4h0M583.4 407.6h0M566.2 398.9h0M600.4 427.4h0M595.4 404.7h0M556.0 421.6h0M602.7 432.3h0M587.2 435.4h0M612.3 412.9h0M560.3 428.9h0M583.3 403.4h0M587.0 429.7h0M562.3 423.5h0M593.8 408.3h0M615.2 431.1h0M576.9 435.1h0M577.9 422.9h0M546.6 425.6h0M542.1 415.5h0M579.1 417.5h0M585.2 413.3h0M589.3 446.3h0M609.2 421.1h0M608.8 429.7h0M567.8 402.8h0M595.4 407.4h0M561.4 406.6h0M546.6 412.3h0M575.2 432.3h0M602.8 442.3h0M612.3 453.1h0M561.9 408.2h0M602.2 406.2h0M618.3 450.1h0M611.0 454.3h0M586.4 427.8h0M610.3 453.0h0M614.9 418.0h0M624.8 453.2h0M550.1 410.8h0M573.0 413.5h0M596.1 447.6h0M607.1 445.7h0M622.1 456.0h0M567.7 402.8h0M611.4 453.6h0M609.0 426.6h0M587.9 429.4h0M560.5 411.9h0M589.4 417.5h0M535.4 416.0h0M597.7 428.3h0M545.2 416.0h0M566.5 432.5h0M552.0 421.9h0M614.0 433.5h0M617.2 444.5h0M590.6 423.6h0M618.6 432.4h0M595.9 436.6h0M616.9 449.0h0M559.5 406.4h0M623.2 460.7h0M580.0 460.0h0M570.2 439.5h0M552.5 435.0h0M609.7 468.0h0M596.0 446.0h0M574.0 442.0h0M609.0 459.5h0M626.5 466.5h0M528.5 421.5h0M531.5 418.5h0M529.0 423.5h0"/><path stroke="#40ab46" d="M294.1 289.3h0M284.8 303.4h0M275.7 325.5h0M288.1 304.8h0M266.3 325.0h0M255.9 313.7h0M293.1 303.7h0M285.7 288.8h0M296.5 306.3h0M266.7 313.9h0M278.0 300.2h0M261.0 313.4h0M300.5 299.6h0M275.2 322.1h0M253.6 309.3h0M244.4 317.9h0M288.3 307.7h0M279.7 317.7h0M246.1 319.5h0M308.0 299.5h0M272.6 317.9h0M246.0 322.7h0M263.8 305.7h0M260.2 309.1h0M289.1 298.4h0M271.2 313.0h0M283.1 315.4h0M296.2 288.4h0M273.1 305.0h0M249.6 316.2h0M243.3 327.8h0M291.1 292.9h0M261.7 302.5h0M279.1 309.0h0M269.1 298.5h0M308.6 293.5h0M243.1 331.4h0M284.1 292.8h0M285.4 287.1h0M262.4 303.4h0M254.8 322.9h0M268.0 296.5h0M259.6 310.6h0M262.3 319.0h0M248.1 317.5h0M255.7 323.7h0M268.2 324.2h0M300.1 294.0h0M253.1 325.5h0M269.7 312.1h0M308.4 295.9h0M261.7 299.9h0M260.8 313.9h0M262.3 305.9h0M251.9 329.5h0M270.0 307.8h0M282.0 311.3h0M277.0 294.6h0M255.2 308.5h0M267.7 310.7h0M249.8 312.7h0M291.0 310.1h0M282.8 319.1h0M278.0 311.4h0M309.5 292.4h0M247.1 317.9h0M253.8 320.2h0M294.9 292.7h0M273.6 309.2h0M254.3 306.5h0M283.1 302.1h0M299.9 286.7h0M286.2 306.9h0M291.9 310.4h0M244.4 323.2h0M307.8 298.2h0M253.3 329.9h0M287.6 319.4h0M297.2 306.2h0M247.1 330.8h0M248.0 326.9h0M246.6 327.2h0M278.1 302.1h0M284.0 297.2h0M266.6 300.4h0M302.9 299.7h0M281.9 294.3h0M256.6 308.6h0M317.2 290.9h0M273.2 310.1h0M269.1 325.7h0M274.1 302.5h0M246.9 321.4h0M248.1 326.2h0M264.1 297.4h0M265.0 307.9h0M254.0 307.2h0M266.4 302.9h0M279.8 309.9h0M257.5 310.0h0M265.9 297.0h0M288.8 311.2h0M272.9 301.5h0M244.8 325.9h0M252.5 310.9h0M249.7 325.9h0M286.6 315.9h0M282.1 311.5h0M294.8 289.0h0M301.1 297.9h0M300.5 295.7h0M281.4 304.2h0M280.1 318.6h0M293.5 289.5h0M301.6 300.4h0M296.1 299.8h0M283.2 308.1h0M279.1 291.5h0M277.7 298.7h0M258.3 313.7h0M252.7 311.0h0M260.0 328.9h0M277.8 300.3h0M266.9 326.1h0M309.4 291.6h0M271.5 304.7h0M270.5 306.3h0M249.5 325.9h0M282.7 294.9h0M299.7 288.2h0M300.7 307.4h0M316.5 291.9h0M279.6 302.3h0M265.4 321.3h0M294.5 300.2h0M286.5 304.7h0M258.1 329.3h0M281.6 296.4h0M277.8 292.5h0M302.1 305.6h0M274.8 311.0h0M271.8 302.0h0M282.1 316.0h0M273.7 307.2h0M243.8 319.9h0M283.7 318.5h0M278.4 312.3h0M244.4 323.4h0M293.7 300.4h0M283.8 313.8h0M272.8 296.5h0M265.7 307.9h0M281.7 318.2h0M275.3 298.1h0M268.7 306.0h0M296.7 295.3h0M282.2 295.7h0M307.9 296.9h0M259.2 322.3h0M281.5 294.8h0M259.4 305.8h0M301.9 287.3h0M295.2 304.0h0M271.6 301.7h0M263.9 302.7h0M270.2 325.2h0M256.9 303.3h0M274.6 324.8h0M303.5 287.8h0M268.8 298.9h0M262.5 320.2h0M266.9 299.0h0M260.2 308.6h0M272.6 297.9h0M276.2 309.5h0M290.6 301.5h0M267.2 303.2h0M304.8 289.6h0M257.2 321.9h0M249.0 309.7h0M298.9 307.3h0M260.2 305.8h0M295.2 291.6h0M287.3 303.7h0M301.2 295.4h0M253.7 328.2h0M288.2 301.5h0M282.4 296.9h0M262.3 323.1h0M318.1 290.9h0M289.7 315.6h0M258.9 303.5h0M261.9 314.6h0M294.2 295.6h0M296.3 294.7h0M266.6 295.6h0M273.3 312.2h0M293.2 290.2h0M254.5 319.2h0M274.5 299.4h0M266.6 313.0h0M270.2 305.8h0M270.8 295.3h0M300.4 295.6h0M275.7 325.2h0M278.7 293.6h0M248.4 315.7h0M271.3 310.0h0M250.0 309.3h0M280.4 288.4h0M308.2 293.5h0M305.1 296.5h0M274.1 326.4h0M308.6 294.6h0M258.9 305.0h0M283.3 304.2h0M244.5 312.8h0M302.8 287.6h0M309.3 291.5h0M289.9 312.2h0M292.2 300.5h0M275.4 313.8h0M275.8 317.4h0M277.5 306.8h0M243.1 315.5h0M281.0 297.1h0M278.5 294.4h0M279.7 290.9h0M282.7 287.8h0M292.9 289.7h0M282.8 288.4h0M282.2 303.9h0M302.7 293.4h0M307.5 292.7h0M282.3 301.1h0M254.9 323.5h0M250.6 311.3h0M292.9 303.1h0M292.4 304.7h0M306.1 298.5h0M270.5 322.5h0M277.2 294.3h0M301.7 288.1h0M307.9 298.0h0M288.8 317.7h0M291.3 306.5h0M294.3 286.9h0M259.4 313.8h0M289.1 295.6h0M291.9 308.6h0M252.2 330.8h0M249.0 316.4h0M273.9 298.5h0M286.9 302.6h0M293.7 307.1h0M274.2 297.2h0M245.9 323.2h0M257.4 315.0h0M282.4 316.6h0M307.3 294.2h0M266.4 300.2h0M245.1 328.5h0M301.5 307.5h0M268.5 321.8h0M299.1 298.6h0M286.2 306.7h0M262.8 316.6h0M301.9 301.5h0M276.7 320.6h0M287.6 300.6h0M258.4 315.7h0M247.5 329.5h0M249.9 330.4h0M246.5 314.1h0M270.7 325.0h0M246.6 327.5h0M292.5 299.6h0M302.8 295.6h0M267.1 306.1h0M264.2 320.2h0M271.1 301.2h0M276.7 322.9h0M269.4 319.6h0M284.9 296.2h0M311.3 290.2h0M307.9 294.0h0M256.2 309.5h0M269.4 325.7h0M298.1 309.7h0M250.1 316.4h0M247.8 323.6h0M292.3 302.9h0M273.8 304.7h0M313.6 289.9h0M260.2 307.9h0M269.5 301.5h0M253.8 326.3h0M255.0 306.9h0M251.4 308.0h0M261.3 301.5h0M283.7 293.5h0M267.9 294.9h0M300.8 306.7h0M257.2 316.4h0M273.6 323.8h0M297.6 309.8h0M292.6 308.0h0M252.7 314.8h0M274.1 321.4h0M275.4 296.8h0M293.4 307.6h0M266.6 316.0h0M292.4 297.8h0M275.6 307.6h0M291.7 305.4h0M256.1 317.2h0M304.5 304.5h0M254.3 323.3h0M249.4 313.4h0M285.2 320.2h0M282.8 316.5h0M258.3 318.6h0M273.1 322.4h0M263.5 305.0h0M275.4 319.3h0M269.8 298.5h0M259.4 321.4h0M259.0 324.3h0M273.1 296.0h0M251.7 323.1h0M279.3 312.8h0M269.9 316.5h0M279.3 299.9h0M285.8 291.8h0M271.8 298.0h0M275.8 294.7h0M264.1 297.6h0M265.7 308.8h0M276.0 316.4h0M294.8 303.2h0M245.8 325.5h0M252.6 325.7h0M292.7 286.5h0M242.1 331.5h0M294.5 297.8h0M260.2 323.1h0M269.4 293.1h0M254.9 328.6h0M257.2 319.1h0M284.4 321.4h0M286.3 298.5h0M281.3 288.6h0M279.2 292.7h0M256.6 301.0h0M243.0 331.5h0M321.0 289.0h0M318.0 290.5h0"/><path stroke="#4ab59a" d="M231.1 532.8h0M213.7 553.1h0M242.9 566.1h0M217.2 521.7h0M229.8 539.6h0M216.6 546.0h0M236.1 564.0h0M195.2 523.0h0M206.8 524.9h0M229.3 550.4h0M242.7 560.8h0M216.5 570.5h0M223.4 541.6h0M193.8 523.0h0M217.0 547.7h0M223.4 566.3h0M222.9 535.3h0M229.2 552.5h0M229.6 551.1h0M219.9 521.7h0M233.4 577.7h0M226.2 570.6h0M220.5 535.9h0M201.7 523.8h0M200.5 523.3h0M226.1 569.0h0M225.0 552.3h0M212.6 551.2h0M213.4 529.9h0M210.7 536.8h0M232.3 571.3h0M215.7 548.4h0M194.9 518.3h0M213.4 534.9h0M199.7 524.2h0M204.4 536.0h0M213.8 525.0h0M206.7 520.6h0M237.9 563.2h0M220.1 525.1h0M232.3 543.5h0M196.2 519.6h0M206.7 531.9h0M211.7 561.2h0M214.0 524.3h0M218.4 526.9h0M232.3 547.8h0M252.5 569.9h0M217.3 523.3h0M218.0 522.3h0M233.5 561.8h0M225.3 581.2h0M205.7 517.2h0M225.7 563.6h0M250.6 568.0h0M218.0 536.9h0M219.6 542.5h0M221.7 532.6h0M240.0 562.3h0M220.1 539.5h0M235.3 570.2h0M218.0 564.2h0M208.4 534.7h0M231.1 560.4h0M229.7 561.6h0M201.9 517.7h0M232.3 580.5h0M206.8 521.0h0M241.9 564.6h0M218.4 539.1h0M235.5 575.5h0M246.0 573.6h0M214.6 542.7h0M195.0 524.4h0M246.2 575.2h0M213.7 526.8h0M214.7 541.0h0M227.8 533.9h0M225.9 553.3h0M205.7 516.0h0M227.1 548.8h0M242.0 569.7h0M240.6 571.9h0M223.0 540.3h0M188.2 519.8h0M209.3 543.5h0M219.9 533.5h0M234.8 549.3h0M220.1 547.7h0M208.4 536.7h0M228.1 552.5h0M202.8 519.4h0M221.8 536.2h0M211.8 524.7h0M231.7 559.6h0M215.2 541.6h0M216.0 571.2h0M232.8 547.9h0M217.2 527.2h0M220.0 535.3h0M218.0 556.2h0M233.0 551.4h0M228.2 567.5h0M224.4 565.7h0M255.3 570.5h0M233.7 550.4h0M186.1 518.5h0M250.4 573.8h0M252.0 569.7h0M223.3 555.9h0M234.6 545.7h0M234.2 540.9h0M198.2 528.6h0M220.1 548.2h0M238.1 574.2h0M208.3 528.0h0M231.4 541.6h0M221.2 524.2h0M219.8 568.0h0M229.7 546.9h0M223.3 555.2h0M247.1 568.0h0M232.9 570.0h0M214.4 560.2h0M220.0 523.8h0M210.7 523.8h0M222.2 544.0h0M219.6 571.5h0M196.3 516.2h0M222.2 528.6h0M224.9 558.4h0M209.5 546.8h0M223.2 564.3h0M200.0 519.3h0M200.4 519.5h0M218.5 530.9h0M206.2 521.0h0M234.4 567.6h0M211.1 535.2h0M220.2 544.0h0M214.5 566.8h0M231.6 552.3h0M216.3 553.3h0M229.0 557.3h0M235.6 564.0h0M231.3 559.1h0M206.8 522.4h0M232.3 533.4h0M222.8 569.5h0M209.2 526.0h0M211.3 548.2h0M212.8 522.0h0M221.0 534.3h0M214.3 529.3h0M230.5 571.2h0M202.4 521.1h0M214.7 566.4h0M202.2 524.1h0M220.8 543.0h0M198.0 519.1h0M220.7 523.0h0M200.3 530.2h0M226.8 573.3h0M188.7 517.9h0M234.1 554.2h0M219.1 526.4h0M214.5 533.0h0M225.9 534.2h0M219.0 529.4h0M219.6 563.4h0M209.6 542.1h0M216.4 563.0h0M230.7 561.1h0M213.5 539.5h0M234.3 564.8h0M230.8 541.4h0M224.6 549.2h0M237.9 563.0h0M252.9 571.3h0M242.2 571.9h0M194.0 524.3h0M206.8 520.6h0M204.2 532.0h0M214.4 539.8h0M200.4 515.2h0M225.6 548.4h0M199.9 533.4h0M243.0 561.7h0M223.1 569.8h0M224.9 567.5h0M229.1 555.0h0M251.6 569.8h0M224.4 536.1h0M235.1 578.0h0M230.5 559.4h0M215.1 545.5h0M233.4 575.4h0M218.8 536.7h0M215.1 568.5h0M199.2 534.6h0M218.6 540.9h0M230.5 548.5h0M188.2 517.3h0M234.4 580.5h0M210.4 531.6h0M222.5 539.5h0M218.7 541.5h0M244.3 575.5h0M210.0 534.0h0M216.2 551.8h0M236.7 580.6h0M228.7 546.6h0M229.6 550.5h0M235.0 579.1h0M230.7 569.0h0M221.5 555.5h0M220.5 540.2h0M240.3 578.3h0M211.4 551.5h0M206.2 524.3h0M234.7 553.7h0M219.9 523.4h0M243.8 570.4h0M239.7 567.1h0M229.5 571.2h0M244.9 577.3h0M233.4 572.3h0M224.4 532.6h0M234.4 560.2h0M231.8 574.0h0M212.3 544.7h0M235.7 567.9h0M221.7 562.0h0M203.4 533.1h0M205.9 533.1h0M217.8 539.8h0M215.4 552.8h0M200.8 520.6h0M219.5 566.8h0M237.7 577.5h0M231.6 534.8h0M220.4 533.4h0M185.0 531.2h0M204.4 549.1h0M245.6 539.8h0M251.6 544.6h0M267.8 547.6h0M263.0 551.1h0M264.8 557.7h0M258.8 562.5h0M264.8 570.3h0M273.1 561.3h0M221.7 581.0h0M230.7 587.6h0M222.0 643.0h0M262.3 581.0h0M174.0 518.0h0M190.0 520.0h0M468.5 491.5h0"/><path stroke="#44b1dc" d="M605.4 485.6h0M617.9 480.4h0M603.0 480.2h0M608.0 485.1h0M614.7 488.6h0M620.6 474.7h0M609.4 476.8h0M600.4 476.9h0M610.5 478.7h0M604.0 487.5h0M607.4 488.5h0M599.9 480.3h0M617.3 491.6h0M620.3 476.6h0M604.2 478.6h0M620.5 480.0h0M600.2 481.8h0M617.0 475.5h0M609.8 483.5h0M607.4 477.0h0M615.0 490.0h0M617.3 490.7h0M604.1 489.5h0M613.7 494.5h0M603.9 492.7h0M609.4 477.6h0M608.5 495.4h0M604.1 488.7h0M614.2 480.1h0M619.7 479.7h0M606.4 486.4h0M604.7 488.0h0M612.6 496.5h0M601.6 480.9h0M601.9 477.5h0M599.8 467.4h0M593.5 477.6h0M596.3 475.5h0M609.7 470.8h0M616.0 472.0h0M626.6 502.0h0M631.5 484.5h0M633.9 484.9h0M629.6 489.8h0M634.7 499.4h0M632.8 499.9h0M624.4 480.1h0M630.2 505.0h0M634.5 487.0h0M621.7 493.3h0M625.1 476.0h0M624.8 488.4h0M622.6 485.6h0M625.3 490.4h0M621.1 483.8h0M626.7 488.5h0M627.8 505.4h0M631.4 503.2h0M625.1 479.7h0M633.8 491.6h0M629.9 499.1h0M633.7 484.3h0M626.1 508.4h0M629.3 484.8h0M631.3 483.7h0M635.1 495.2h0M624.2 483.1h0M633.7 499.4h0M627.0 504.3h0M621.2 485.5h0M631.4 500.0h0M634.1 488.8h0M637.3 501.8h0M625.7 488.7h0M634.7 487.1h0M629.4 493.5h0M632.1 507.8h0M621.6 486.7h0M620.3 489.5h0M628.8 505.9h0M632.0 495.7h0M626.9 495.5h0M634.4 505.4h0M633.7 492.8h0M633.5 504.8h0M631.7 507.0h0M632.7 497.0h0M624.4 476.5h0M630.8 504.9h0M624.3 482.0h0M623.4 477.5h0M634.6 487.5h0M621.7 484.3h0M620.2 490.7h0M629.8 504.3h0M621.2 482.4h0M631.3 486.8h0M625.5 495.3h0M634.8 494.1h0M631.3 501.2h0M630.4 489.0h0M629.0 496.1h0M628.3 479.0h0M627.9 499.6h0M632.8 491.0h0M625.7 481.1h0M626.9 484.6h0M629.1 490.4h0M622.8 484.0h0M629.9 500.3h0M633.1 501.0h0M633.1 497.6h0M624.1 487.3h0M625.9 507.7h0M634.7 491.1h0M628.3 504.8h0M621.5 478.1h0M630.0 493.0h0M623.1 483.4h0M633.3 488.4h0M634.8 505.6h0M623.2 496.0h0M635.2 503.5h0M636.3 494.0h0M620.4 486.1h0M631.2 507.2h0M628.4 498.0h0M623.0 483.1h0M621.5 481.5h0M627.9 496.0h0M631.4 500.5h0M628.2 489.0h0M632.1 500.8h0M623.7 498.4h0M632.5 491.7h0M623.5 488.7h0M634.4 504.9h0M631.4 501.8h0M623.3 499.2h0M637.1 497.9h0M622.2 493.2h0M629.8 504.8h0M628.8 497.2h0M630.6 504.0h0M629.6 484.9h0M635.2 504.4h0M627.9 478.6h0M631.7 481.8h0M627.4 478.1h0M625.9 477.5h0M633.2 505.9h0M626.2 485.4h0M632.5 496.5h0M629.1 491.1h0M626.9 496.9h0M631.6 508.4h0M633.3 503.9h0M632.3 505.9h0M627.4 506.9h0M627.6 500.5h0M623.9 485.3h0M625.8 486.2h0M620.8 490.6h0M637.2 502.6h0M633.7 484.3h0M623.9 489.5h0M625.4 502.9h0M634.5 494.0h0M625.1 497.5h0M626.2 494.1h0M629.4 498.4h0M629.5 509.2h0M626.9 508.3h0M620.7 482.0h0M622.4 490.4h0M632.4 499.9h0M633.5 502.2h0M623.8 483.6h0M623.1 483.7h0M630.5 498.6h0M630.7 500.1h0M624.9 476.4h0M626.0 479.3h0M621.2 492.5h0M624.3 502.9h0M622.5 477.8h0M624.9 489.3h0M632.4 490.7h0M635.7 504.1h0M632.1 484.4h0M631.9 496.0h0M631.9 480.8h0M621.8 477.6h0M631.7 495.4h0M623.4 476.4h0M626.1 501.1h0M623.9 487.7h0M629.2 478.2h0"/><path stroke="#5e93f5" d="M184.2 508.7h0M171.3 496.4h0M187.0 504.9h0M190.4 517.0h0M203.0 503.6h0M173.8 500.0h0M179.6 507.2h0M190.1 506.7h0M166.0 498.7h0M190.3 508.9h0M186.4 496.8h0M191.8 499.0h0M171.4 502.3h0M184.3 511.6h0M188.8 505.5h0M190.9 515.2h0M191.2 512.5h0M189.8 496.8h0M171.2 504.2h0M193.7 502.1h0M190.5 514.3h0M166.5 498.0h0M170.4 499.3h0M179.0 503.9h0M164.3 508.8h0M176.7 512.4h0M180.4 496.6h0M191.1 496.2h0M189.6 510.3h0M174.3 499.0h0M197.6 509.3h0M187.2 497.3h0M193.3 499.5h0M168.6 512.1h0M172.7 512.6h0M175.8 507.0h0M175.1 503.8h0M182.3 499.1h0M188.8 512.2h0M193.4 501.6h0M182.8 497.0h0M191.8 502.9h0M192.9 498.2h0M165.0 508.9h0M169.4 512.5h0M190.5 508.2h0M167.0 497.1h0M186.9 494.6h0M189.2 498.6h0M172.4 504.0h0M184.7 513.0h0M170.7 500.1h0M189.5 512.0h0M170.0 500.7h0M190.5 499.2h0M167.8 498.1h0M196.4 500.6h0M174.9 512.9h0M183.8 495.9h0M181.5 497.3h0M166.2 506.5h0M184.2 502.2h0M192.9 507.2h0M163.9 502.9h0M182.5 498.9h0M190.8 498.0h0M175.1 505.6h0M192.7 514.4h0M177.5 504.7h0M188.5 494.5h0M181.2 510.4h0M166.6 505.3h0M188.5 500.3h0M195.3 504.4h0M164.6 503.1h0M163.1 500.0h0M168.1 507.2h0M179.9 501.5h0M166.3 498.6h0M172.4 513.5h0M187.9 500.0h0M181.6 512.7h0M176.0 498.8h0M172.2 505.4h0M199.1 501.0h0M176.1 497.0h0M199.5 508.5h0M172.7 502.3h0M177.6 501.9h0M177.7 494.7h0M179.2 510.3h0M193.4 513.9h0M197.2 498.9h0M190.2 502.7h0M185.0 501.4h0M197.6 501.7h0M191.1 510.8h0M185.3 505.0h0M176.0 514.7h0M170.4 501.5h0M172.0 494.4h0M194.0 497.3h0M181.5 503.4h0M174.7 510.2h0M200.9 505.4h0M186.5 494.6h0M187.1 516.1h0M184.0 505.8h0M190.6 497.6h0M177.0 502.2h0M180.2 512.8h0M180.0 494.2h0M184.3 515.8h0M196.1 502.0h0M170.8 513.6h0M180.2 502.7h0M192.6 519.1h0M169.8 500.4h0M175.5 513.2h0M169.2 507.7h0M183.2 511.3h0M201.6 507.8h0M185.9 495.7h0M189.1 515.3h0M179.8 509.3h0M172.4 499.6h0M179.6 506.7h0M181.8 494.2h0M192.9 513.7h0M171.4 499.0h0M183.9 496.6h0M169.8 508.8h0M193.1 513.7h0M192.7 512.6h0M203.1 504.6h0M196.5 511.6h0M167.2 505.1h0M175.9 514.2h0M171.8 497.3h0M168.0 503.6h0M188.5 500.4h0M168.1 497.9h0M164.6 497.2h0M174.9 506.4h0M169.0 505.7h0M181.9 497.3h0M187.3 495.7h0M178.9 502.0h0M179.8 501.9h0M191.7 503.1h0M176.7 510.2h0M202.0 503.4h0M180.2 500.3h0M185.6 511.1h0M193.7 519.7h0M167.3 502.3h0M187.2 511.6h0M185.4 503.4h0M169.0 494.8h0M162.0 501.0h0M182.3 506.2h0M176.5 507.3h0M182.2 501.3h0M178.1 509.6h0M196.0 499.2h0M177.4 503.0h0M184.9 499.6h0M168.0 512.0h0M167.4 498.2h0M163.4 499.3h0M193.7 512.9h0M180.2 497.1h0M194.3 517.0h0M178.1 494.2h0M192.5 510.2h0M165.8 496.2h0M168.9 509.6h0M180.3 503.0h0M172.1 498.3h0M192.4 496.6h0M168.9 495.9h0M176.5 513.4h0M163.4 507.2h0M180.5 515.0h0M186.6 504.9h0M175.9 503.2h0M167.2 496.6h0M178.0 512.0h0M196.0 506.7h0M179.4 511.3h0M186.3 513.1h0M188.4 500.8h0M177.7 499.4h0M175.1 514.0h0M172.6 509.6h0M182.7 499.6h0M187.1 504.1h0M173.2 494.8h0M199.8 504.6h0M193.3 499.0h0M193.5 510.7h0M165.2 506.1h0M176.0 520.0h0"/><path stroke="#c472ee" d="M550.1 480.0h0M549.6 479.9h0M550.4 479.2h0M550.9 479.4h0M551.2 477.2h0M551.8 478.1h0M552.5 477.3h0M552.8 476.8h0M553.2 477.1h0M554.0 477.6h0M553.3 476.8h0M555.0 475.6h0M555.3 475.9h0M555.3 476.0h0M557.2 475.6h0M557.1 475.5h0M557.2 475.2h0M557.3 474.5h0M558.5 474.8h0M558.5 473.7h0M559.4 473.5h0M559.7 473.6h0M559.7 473.3h0M560.8 472.5h0M560.5 472.0h0M561.5 472.5h0M561.1 472.1h0M562.6 470.8h0M563.4 471.3h0M563.7 470.3h0M562.9 471.3h0M564.7 470.0h0M564.5 468.6h0M564.2 468.3h0M565.6 467.4h0M565.2 467.3h0M566.0 467.4h0M567.8 467.1h0M568.4 467.8h0M568.3 468.3h0M569.8 468.1h0"/><path stroke="#e66bb8" d="M469.8 489.7h0M472.2 489.7h0M470.0 491.4h0M472.3 491.4h0M471.0 490.5h0"/></g><path d="M137.8 267.6V681.5H661.5" fill="none" stroke="#4a4a4a" stroke-width="1.3"/><path d="M133.3 343.2H137.8" stroke="#4a4a4a" stroke-width="1.3"/><path d="M133.3 429.3H137.8" stroke="#4a4a4a" stroke-width="1.3"/><path d="M133.3 515.4H137.8" stroke="#4a4a4a" stroke-width="1.3"/><path d="M133.3 601.5H137.8" stroke="#4a4a4a" stroke-width="1.3"/><path d="M139.0 681.5V686" stroke="#4a4a4a" stroke-width="1.3"/><path d="M247.9 681.5V686" stroke="#4a4a4a" stroke-width="1.3"/><path d="M356.8 681.5V686" stroke="#4a4a4a" stroke-width="1.3"/><path d="M465.6 681.5V686" stroke="#4a4a4a" stroke-width="1.3"/><path d="M574.5 681.5V686" stroke="#4a4a4a" stroke-width="1.3"/><g font-family="Liberation Sans" fill="#2e2e2e" stroke="#2e2e2e" stroke-width="0.45"><text x="129.2" y="349.9" font-size="17" text-anchor="end">10</text><text x="129.2" y="436.0" font-size="17" text-anchor="end">5</text><text x="129.2" y="522.1" font-size="17" text-anchor="end">0</text><text x="129.2" y="608.2" font-size="17" text-anchor="end">-5</text><text x="139.0" y="703.6" font-size="17" text-anchor="middle">-10</text><text x="247.9" y="703.6" font-size="17" text-anchor="middle">-5</text><text x="356.8" y="703.6" font-size="17" text-anchor="middle">0</text><text x="465.6" y="703.6" font-size="17" text-anchor="middle">5</text><text x="574.5" y="703.6" font-size="17" text-anchor="middle">10</text><text x="363.2" y="725" font-size="20" textLength="72" lengthAdjust="spacingAndGlyphs">UMAP_1</text><text transform="translate(101.5 512.4) rotate(-90)" x="0" y="0" font-size="20" textLength="74" lengthAdjust="spacingAndGlyphs">UMAP_2</text><circle cx="689.2" cy="395.7" r="5.1" fill="#e77364"/><text x="708" y="401.6" font-size="16.5">0</text><circle cx="689.2" cy="416.7" r="5.1" fill="#cf8c2a"/><text x="708" y="422.6" font-size="16.5">1</text><circle cx="689.2" cy="437.7" r="5.1" fill="#93a02a"/><text x="708" y="443.6" font-size="16.5">2</text><circle cx="689.2" cy="458.7" r="5.1" fill="#40ab46"/><text x="708" y="464.6" font-size="16.5">3</text><circle cx="689.2" cy="479.7" r="5.1" fill="#4ab59a"/><text x="708" y="485.6" font-size="16.5">4</text><circle cx="689.2" cy="500.7" r="5.1" fill="#44b1dc"/><text x="708" y="506.6" font-size="16.5">5</text><circle cx="689.2" cy="521.7" r="5.1" fill="#5e93f5"/><text x="708" y="527.6" font-size="16.5">6</text><circle cx="689.2" cy="542.7" r="5.1" fill="#c472ee"/><text x="708" y="548.6" font-size="16.5">7</text><circle cx="689.2" cy="563.7" r="5.1" fill="#e66bb8"/><text x="708" y="569.6" font-size="16.5">8</text></g></svg>
<div style="position:absolute;left:0;top:0;width:1283px;height:918.5px;overflow:hidden"><svg style="left:0;top:0" width="1320" height="920"><circle cx="38.6" cy="66" r="22" fill="#76a1d6"/><text x="38.9" y="75.4" font-family="Liberation Serif" font-size="29" fill="#fff" text-anchor="middle">R</text><path d="M71.4 76.6H79.4L82.4 79.6V87.2H71.4Z" fill="#fff" stroke="#c8c8c8" stroke-width="0.8"/><circle cx="70.9" cy="78.1" r="5.3" fill="#3d9a4e"/><path d="M67.9 78.1h6.0M70.9 75.1v6.0" stroke="#fff" stroke-width="2.2"/><path d="M89.6 79.7h5.0l-2.5 3.0z" fill="#333"/><rect x="99.7" y="72.0" width="1" height="14.5" fill="#d2d5d8"/><path d="M113 76l6-2.5 6 2.5v10l-6 3-6-3z" fill="#9fd0ec" stroke="#7fb4dc" stroke-width="0.7"/><text x="119" y="86.5" font-family="Liberation Serif" font-size="10" fill="#2b5c9a" text-anchor="middle">R</text><circle cx="110.0" cy="77.4" r="5.3" fill="#3d9a4e"/><path d="M107.0 77.4h6.0M110.0 74.4v6.0" stroke="#fff" stroke-width="2.2"/><rect x="129.7" y="72.0" width="1" height="14.5" fill="#d2d5d8"/><path d="M136.0 76.0h5l1.5 2h8.5v11.0h-15.0z" fill="#e8c36a" stroke="#c49a3a" stroke-width="0.6"/><path d="M138.0 80.0h15.0l-3 7.0h-15.0z" fill="#f3d78a" stroke="#c49a3a" stroke-width="0.6"/><path d="M145.0 80.0q3.8 -6 6.6 -5v-2.5l4 4.5-4 4.5v-2.5q-3.3 -1 -6.6 4z" fill="#3aaa7a"/><path d="M160.2 79.7h5.0l-2.5 3.0z" fill="#333"/><rect x="169.4" y="72.0" width="1" height="14.5" fill="#d2d5d8"/><rect x="178.2" y="74.3" width="12.8" height="12.8" rx="1" fill="#c9d6e8"/><rect x="180.4" y="75.8" width="8.4" height="4.9" fill="#fff" opacity="0.85"/><rect x="182.0" y="82.2" width="5.1" height="3.9" fill="#fff" opacity="0.85"/><rect x="201.0" y="74.0" width="12.5" height="12.5" rx="1" fill="#c9d6e8"/><rect x="203.2" y="75.5" width="8.1" height="4.8" fill="#fff" opacity="0.85"/><rect x="204.8" y="81.8" width="5.0" height="3.8" fill="#fff" opacity="0.85"/><rect x="204" y="72" width="12.8" height="12" rx="1" fill="none" stroke="#c9d6e8" stroke-width="1"/><rect x="223.6" y="72.0" width="1" height="14.5" fill="#d2d5d8"/><rect x="235" y="72" width="10" height="6" fill="#eddcb0"/><rect x="232.4" y="77" width="15.5" height="8" rx="2" fill="#c8cdd3"/><rect x="234.5" y="84" width="11.5" height="2.5" fill="#e6e8ea"/><rect x="254.2" y="72.0" width="1" height="14.5" fill="#d2d5d8"/><rect x="261.8" y="72.3" width="143.4" height="16.8" rx="3" fill="#fff" stroke="#d3d6d9" stroke-width="1"/><path d="M269 87q0.5-7 7.5-7v-3.5l5.5 5-5.5 5v-3.2q-4.5 0-7.5 3.7z" fill="#8d9bb3"/><rect x="414.0" y="72.0" width="1" height="14.5" fill="#d2d5d8"/><path d="M426 75.5h9M430.5 72v7" stroke="#39a34a" stroke-width="2"/><rect x="425.5" y="78.5" width="10" height="1.6" fill="#d9534f"/><path d="M433.8 84a3.6 3.6 0 1 1 -1.2 -2.7" fill="none" stroke="#5a78a8" stroke-width="1.6"/><path d="M431 80.5l3.5 1-1.2 2.6z" fill="#5a78a8"/><path d="M445.2 79.7h5.0l-2.5 3.0z" fill="#333"/><rect x="455.0" y="72.0" width="1" height="14.5" fill="#d2d5d8"/><rect x="463.5" y="73" width="14" height="14.5" fill="#f4f5f6" stroke="#c9ccd0" stroke-width="1"/><path d="M463.5 80.2h14M470.5 73v14.5" stroke="#c9ccd0" stroke-width="1"/><path d="M485.5 79.7h5.0l-2.5 3.0z" fill="#333"/><path d="M543.0 79.7h5.0l-2.5 3.0z" fill="#333"/><path d="M15.5 106.2H26.0L29.0 109.2V120.2H15.5Z" fill="#fff" stroke="#c8c8c8" stroke-width="0.8"/><circle cx="19.8" cy="112.3" r="5" fill="#a13544"/><rect x="16.5" y="111.3" width="6.6" height="1.8" fill="#e6c5c9"/><path d="M152.1 110.8l5.6 5.6M157.7 110.8l-5.6 5.6" stroke="#b0b0b0" stroke-width="1.2"/><path d="M16 137l6-6v3.5h7v5h-7v3.5z" fill="#eef0f2" stroke="#dde0e3" stroke-width="0.8"/><path d="M45 137l-6-6v3.5h-7v5h7v3.5z" fill="#eef0f2" stroke="#dde0e3" stroke-width="0.8"/><rect x="54.1" y="130.0" width="1" height="14.0" fill="#d2d5d8"/><rect x="66" y="131" width="11" height="12" rx="1" fill="#fff" stroke="#9db0c8" stroke-width="1"/><rect x="66" y="131" width="11" height="3" fill="#bcd3ee"/><path d="M62.5 143l5-5" stroke="#7890b0" stroke-width="1.3"/><rect x="84.8" y="130.0" width="1" height="14.0" fill="#d2d5d8"/><rect x="94.0" y="130.5" width="12.5" height="12.5" rx="1" fill="#c9d6e8"/><rect x="96.2" y="132.0" width="8.1" height="4.8" fill="#fff" opacity="0.85"/><rect x="97.8" y="138.2" width="5.0" height="3.8" fill="#fff" opacity="0.85"/><rect x="115.0" y="130.0" width="1" height="14.0" fill="#d2d5d8"/><text x="131" y="135.2" font-family="Liberation Serif" font-size="6.5" fill="#999" text-anchor="middle">ABC</text><path d="M125.5 139l3 3.5 6-7" fill="none" stroke="#3a9a3a" stroke-width="1.8"/><circle cx="153.5" cy="135" r="4.3" fill="#dbe9f8" stroke="#3f79c6" stroke-width="1.6"/><path d="M156.5 138.2l5 5" stroke="#8a5a2a" stroke-width="2.4"/><rect x="169.6" y="130.0" width="1" height="14.0" fill="#d2d5d8"/><circle cx="185" cy="138.5" r="5.8" fill="#2f5fc0"/><path d="M180 136q5 -1.5 10 1.5M180.5 140q5 0 9.5 2" stroke="#7fa8ee" stroke-width="0.7" fill="none"/><path d="M187 137l7-7" stroke="#777" stroke-width="1"/><path d="M176 143q3 1 5 -1.5q-3 -1 -4.5 1z" fill="none" stroke="#2f5fc0" stroke-width="0.9"/><path d="M226.5 135.8h5.0l-2.5 3.0z" fill="#333"/><circle cx="249" cy="136.8" r="5.2" fill="none" stroke="#d3d5d8" stroke-width="2.2" stroke-dasharray="2 1.2"/><circle cx="249" cy="136.8" r="2" fill="none" stroke="#d3d5d8" stroke-width="1"/><path d="M263.8 135.8h5.0l-2.5 3.0z" fill="#333"/><rect x="500.9" y="131" width="11.8" height="12.5" rx="2.5" fill="#5aa867"/><text x="506.8" y="141.6" font-family="Liberation Sans" font-size="9.5" font-weight="bold" fill="#eaf5ea" text-anchor="middle">C</text><path d="M495 131.5h5M497.5 129v5" stroke="#3a9a3a" stroke-width="1.6"/><path d="M551.5 135.8h5.0l-2.5 3.0z" fill="#333"/><rect x="565.2" y="130.0" width="1" height="14.0" fill="#d2d5d8"/><path d="M580.8 130.5l5.3 5.5h-3v7.5h-4.6v-7.5h-3z" fill="#fff" stroke="#c9ccd0" stroke-width="0.9"/><path d="M604.6 143.5l5.3-5.5h-3v-7.5h-4.6v7.5h-3z" fill="#fff" stroke="#c9ccd0" stroke-width="0.9"/><rect x="619.0" y="130.0" width="1" height="14.0" fill="#d2d5d8"/><rect x="627.6" y="131.5" width="9" height="11" fill="#fff" stroke="#d0d3d6" stroke-width="0.8"/><rect x="628" y="135.5" width="6" height="2.5" fill="#b9b4ea"/><path d="M634 136.8h6v-3.6l5 4.6-5 4.6v-3.6h-6z" fill="#3aa24a"/><path d="M672.8 135.8h5.0l-2.5 3.0z" fill="#333"/><rect x="685.5" y="130.0" width="1" height="14.0" fill="#d2d5d8"/><path d="M695 136.5q8 -8 15 0" fill="none" stroke="#3b8fe0" stroke-width="2"/><path d="M695 137.5q7 7.5 14.5 0" fill="none" stroke="#3b8fe0" stroke-width="2"/><circle cx="702.5" cy="137" r="2.8" fill="#3b8fe0"/><path d="M715.8 135.8h5.0l-2.5 3.0z" fill="#333"/><rect x="729.4" y="130.0" width="1" height="14.0" fill="#d2d5d8"/><path d="M740 132.5h8M743 135h7.5M740 137.5h10M743 140h7.5M740 142.5h10" stroke="#9a9da2" stroke-width="1"/><rect x="720.5" y="115.3" width="13" height="5.8" rx="1.5" fill="#fff" stroke="#7d8287" stroke-width="1.1"/><rect x="720.5" y="115.3" width="13" height="2.4" fill="#7d8287"/><rect x="738" y="110" width="13" height="11.2" rx="1" fill="#e6e7e8" stroke="#7d8287" stroke-width="1.1"/><rect x="738" y="110" width="13" height="2.4" fill="#7d8287"/><rect x="720.5" y="773.5" width="13" height="5.6" rx="1.5" fill="#fff" stroke="#7d8287" stroke-width="1.1"/><rect x="720.5" y="773.5" width="13" height="2.4" fill="#7d8287"/><rect x="738" y="767.6" width="13" height="11.4" rx="1" fill="#e6e7e8" stroke="#7d8287" stroke-width="1.1"/><rect x="738" y="767.6" width="13" height="2.4" fill="#7d8287"/><circle cx="695.5" cy="151.5" r="4.2" fill="none" stroke="#d6d8da" stroke-width="2" stroke-dasharray="1.8 1.1"/><path d="M712 155h9" stroke="#52b552" stroke-width="2.2"/><path d="M713.5 148h6l-3 3.5z" fill="#aab0b6"/><path d="M735.5 150.2l5.2 3.5-5.2 3.5z" fill="#2f9a3a"/><rect x="690" y="238" width="8" height="9" rx="1" fill="#fafafa" stroke="#d8dadc" stroke-width="0.9"/><path d="M687 246l3-3" stroke="#d0d2d4" stroke-width="1"/><path d="M711.5 241.5l3.8-3.8 3.8 3.8M711.5 245.5l3.8-3.8 3.8 3.8" fill="none" stroke="#8a8d91" stroke-width="1.1"/><path d="M734.8 239.2l6.4 6.4M741.2 239.2l-6.4 6.4" stroke="#6f7276" stroke-width="1.3"/><rect x="65.8" y="737.8" width="9.6" height="9.8" rx="1.5" fill="#d79a2e"/><path d="M68.5 740.3l-0.8 5M72.2 740.3l-0.8 5M67.5 741.8h6M67 744h6" stroke="#fbe9c0" stroke-width="0.9"/><path d="M273.3 741.2h5l-2.5-3.2zM273.3 744.6h5l-2.5 3.2z" fill="#666"/><path d="M749.1 741.2h5l-2.5-3.2zM749.1 744.6h5l-2.5 3.2z" fill="#666"/><path d="M134.4 768.7l5.2 5.2M139.6 768.7l-5.2 5.2" stroke="#b0b0b0" stroke-width="1.2"/><path d="M190.4 768.7l5.2 5.2M195.6 768.7l-5.2 5.2" stroke="#b0b0b0" stroke-width="1.2"/><path d="M119.5 797q1-5 5.5-5v-2.2l3.5 3.5-3.5 3.5v-2.3q-3 0-5.5 2.5z" fill="none" stroke="#c0c3c6" stroke-width="0.9"/><path d="M754 786.5l-7 8" stroke="#d0d2d4" stroke-width="1.2"/><path d="M744 795.5q2.5 -2.5 5 0l-2 4.5q-3 -1 -5 -0.5z" fill="#eceeef" stroke="#cfd1d3" stroke-width="0.8"/><path d="M775.0 132.0h5l1.5 2h8.5v11.0h-15.0z" fill="#e8c36a" stroke="#c49a3a" stroke-width="0.6"/><path d="M777.0 136.0h15.0l-3 7.0h-15.0z" fill="#f3d78a" stroke="#c49a3a" stroke-width="0.6"/><path d="M784.5 136.5q3.8 -6 6.6 -5v-2.5l4 4.5-4 4.5v-2.5q-3.3 -1 -6.6 4z" fill="#3aaa7a"/><rect x="802.2" y="130.5" width="12.8" height="12.8" rx="1" fill="#5d92da"/><rect x="804.4" y="132.0" width="8.4" height="4.9" fill="#fff" opacity="0.85"/><rect x="806.0" y="138.4" width="5.1" height="3.9" fill="#fff" opacity="0.85"/><rect x="823.0" y="130.0" width="1" height="14.0" fill="#d2d5d8"/><rect x="830.5" y="131" width="13" height="12" fill="#fdfdfd" stroke="#b8bcc2" stroke-width="0.8"/><path d="M830.5 134.5h13M830.5 138h13M835 131v12M839.5 131v12" stroke="#c3c7cc" stroke-width="0.7"/><path d="M837.5 137.0q3.8 -6 6.6 -5v-2.5l4 4.5-4 4.5v-2.5q-3.3 -1 -6.6 4z" fill="#3aaa7a"/><path d="M934.7 135.7h5.0l-2.5 3.0z" fill="#333"/><rect x="948.0" y="130.0" width="1" height="14.0" fill="#d2d5d8"/><path d="M970 128l-7 9" stroke="#b5352a" stroke-width="1.8"/><path d="M956 142q3 -8 9 -8l2.5 2.5q-1 6 -9 8.5z" fill="#d9b865" stroke="#b08a3a" stroke-width="0.7"/><rect x="777.5" y="155" width="9" height="9.5" fill="#a8be7a"/><rect x="782" y="152.5" width="8" height="7" fill="#a76bc2"/><rect x="782.5" y="158.5" width="9.5" height="8" rx="1.5" fill="#5c8ede"/><rect x="777.5" y="155" width="6" height="9.5" fill="#a8be7a" opacity="0.95"/><path d="M904.7 158.7h5.0l-2.5 3.0z" fill="#333"/><circle cx="780" cy="183.75" r="6" fill="#78a4d9"/><path d="M778.3 180.55l4.3 3.2-4.3 3.2z" fill="#fff"/><circle cx="780" cy="205.50" r="6" fill="#78a4d9"/><path d="M778.3 202.30l4.3 3.2-4.3 3.2z" fill="#fff"/><circle cx="780" cy="227.35" r="6" fill="#78a4d9"/><path d="M778.3 224.15l4.3 3.2-4.3 3.2z" fill="#fff"/><circle cx="780" cy="249.25" r="6" fill="#78a4d9"/><path d="M778.3 246.05l4.3 3.2-4.3 3.2z" fill="#fff"/><circle cx="780" cy="271.50" r="6" fill="#78a4d9"/><path d="M778.3 268.30l4.3 3.2-4.3 3.2z" fill="#fff"/><circle cx="780" cy="293.70" r="6" fill="#78a4d9"/><path d="M778.3 290.50l4.3 3.2-4.3 3.2z" fill="#fff"/><circle cx="780" cy="315.60" r="6" fill="#78a4d9"/><path d="M778.3 312.40l4.3 3.2-4.3 3.2z" fill="#fff"/><circle cx="780" cy="358.70" r="6" fill="#78a4d9"/><path d="M778.3 355.50l4.3 3.2-4.3 3.2z" fill="#fff"/><path d="M779.0 407.5h5l1.5 2h8.5v12.0h-15.0z" fill="#e8c36a" stroke="#c49a3a" stroke-width="0.6"/><path d="M781.0 411.5h15.0l-3 8.0h-15.0z" fill="#f3d78a" stroke="#c49a3a" stroke-width="0.6"/><circle cx="779.8" cy="410.8" r="5.0" fill="#3aaa8a"/><path d="M776.8 410.8h6.0M779.8 407.8v6.0" stroke="#fff" stroke-width="2.2"/><rect x="864.0" y="405.0" width="1" height="15.0" fill="#d2d5d8"/><rect x="876.5" y="407" width="10.5" height="13" fill="#fff" stroke="#9a9a9a" stroke-width="0.7"/><circle cx="875.4" cy="411.3" r="5" fill="#d79e2a"/><path d="M875.4 414.5v-5M873 411l2.4-2.5 2.4 2.5" stroke="#fff" stroke-width="1.4" fill="none"/><rect x="937.0" y="405.0" width="1" height="15.0" fill="#d2d5d8"/><rect x="949.5" y="407" width="10.5" height="13" fill="#fff" stroke="#9a9a9a" stroke-width="0.7"/><circle cx="948.5" cy="411" r="5" fill="#c9322a"/><path d="M946.5 409.0l4.0 4.0M950.5 409.0l-4.0 4.0" stroke="#fff" stroke-width="1.3"/><rect x="1009" y="407" width="11" height="12" fill="#fff" stroke="#a0a0a0" stroke-width="0.7"/><rect x="1013" y="410" width="11.5" height="11" fill="#fff" stroke="#a0a0a0" stroke-width="0.7"/><path d="M1014.5 415.5h5v-2.5l3.5 3.5-3.5 3.5v-2.5h-5z" fill="#3a90e0"/><rect x="1079.5" y="405.0" width="1" height="15.0" fill="#d2d5d8"/><circle cx="1095.7" cy="413" r="6" fill="#5a9ee0" stroke="#3a7ec0" stroke-width="2.6" stroke-dasharray="2.2 1.6"/><circle cx="1095.7" cy="413" r="2.3" fill="#eaf3fb"/><path d="M1139.1 412.2h5.0l-2.5 3.0z" fill="#333"/><rect x="774.5" y="429.2" width="12.5" height="12.5" rx="2.5" fill="#fff" stroke="#b3b6ba" stroke-width="1"/><path d="M793.5 435l8.5-8 8.5 8" fill="none" stroke="#c7402e" stroke-width="2"/><rect x="796" y="434.5" width="12" height="7.5" fill="#f4f4f4" stroke="#b0b4b8" stroke-width="0.6"/><rect x="800.5" y="436" width="3.2" height="6" fill="#b5542e"/><path d="M855 432l3.2 3.5-3.2 3.5M912 432l3.2 3.5-3.2 3.5" fill="none" stroke="#bfc3c7" stroke-width="0.9"/><path d="M830 460h9l-4.5-7.5z" fill="#7f8a96"/><path d="M812.5 469l-6 6h3.8v6h9v-3h-5.3v-3h3.5z" fill="#48ad4e"/><rect x="777.2" y="495.1" width="12.7" height="12.7" rx="2.5" fill="#fff" stroke="#b3b6ba" stroke-width="1"/><rect x="777.2" y="518.3" width="12.7" height="12.7" rx="2.5" fill="#fff" stroke="#b3b6ba" stroke-width="1"/><rect x="777.2" y="541.2" width="12.7" height="12.7" rx="2.5" fill="#fff" stroke="#b3b6ba" stroke-width="1"/><rect x="777.2" y="564.4" width="12.7" height="12.7" rx="2.5" fill="#fff" stroke="#b3b6ba" stroke-width="1"/><rect x="777.2" y="587.7" width="12.7" height="12.7" rx="2.5" fill="#fff" stroke="#b3b6ba" stroke-width="1"/><rect x="777.2" y="610.7" width="12.7" height="12.7" rx="2.5" fill="#fff" stroke="#b3b6ba" stroke-width="1"/><path d="M805 495.5l7.5-3 7.5 3v9.5l-7.5 3-7.5-3z" fill="#cfe6f6" stroke="#a9cfee" stroke-width="0.7"/><text x="812.5" y="505" font-family="Liberation Serif" font-size="10" fill="#4a6fb8" text-anchor="middle">R</text><path d="M806.8 517.4H816.8L819.8 520.4V531.8H806.8Z" fill="#fff" stroke="#b6b9bd" stroke-width="0.8"/><path d="M806.8 540.3H816.8L819.8 543.3V554.7H806.8Z" fill="#fff" stroke="#b6b9bd" stroke-width="0.8"/><path d="M806.8 563.5H816.8L819.8 566.5V577.9H806.8Z" fill="#fff" stroke="#b6b9bd" stroke-width="0.8"/><path d="M806.8 586.8H816.8L819.8 589.8V601.2H806.8Z" fill="#fff" stroke="#b6b9bd" stroke-width="0.8"/><path d="M806.8 609.8H816.8L819.8 612.8V624.2H806.8Z" fill="#fff" stroke="#b6b9bd" stroke-width="0.8"/><circle cx="809.6" cy="544.8" r="5.2" fill="#3f86d8"/><path d="M806 543q2-3 4-1t3 -1M807 547q2 1 3 -1" stroke="#74b84a" stroke-width="1.8" fill="none"/><circle cx="809.6" cy="568.1" r="5.2" fill="#a13544"/><rect x="806.2" y="567.2" width="6.8" height="1.8" fill="#e6c5c9"/><circle cx="809.6" cy="614.4" r="5.2" fill="#a13544"/><rect x="806.2" y="613.5" width="6.8" height="1.8" fill="#e6c5c9"/></svg></div>
<div style="position:absolute;left:0;top:0;width:1283px;height:918.5px;overflow:hidden">
<div class="t" style="left:74.40px;top:45.37px;font-size:12.60px;line-height:16px;color:#3a3a3a;letter-spacing:-0.462px;-webkit-text-stroke-width:0.60px;">File</div>
<div class="t" style="left:113.50px;top:45.37px;font-size:12.60px;line-height:16px;color:#3a3a3a;letter-spacing:-0.178px;-webkit-text-stroke-width:0.60px;">Edit</div>
<div class="t" style="left:154.80px;top:45.37px;font-size:12.60px;line-height:16px;color:#3a3a3a;letter-spacing:-0.771px;-webkit-text-stroke-width:0.60px;">Code</div>
<div class="t" style="left:202.80px;top:45.37px;font-size:12.60px;line-height:16px;color:#3a3a3a;letter-spacing:-0.197px;-webkit-text-stroke-width:0.60px;">View</div>
<div class="t" style="left:249.40px;top:45.37px;font-size:12.60px;line-height:16px;color:#3a3a3a;letter-spacing:-0.259px;-webkit-text-stroke-width:0.60px;">Plots</div>
<div class="t" style="left:296.50px;top:45.37px;font-size:12.60px;line-height:16px;color:#3a3a3a;letter-spacing:-0.409px;-webkit-text-stroke-width:0.60px;">Session</div>
<div class="t" style="left:357.60px;top:45.37px;font-size:12.60px;line-height:16px;color:#3a3a3a;letter-spacing:-0.159px;-webkit-text-stroke-width:0.60px;">Build</div>
<div class="t" style="left:403.60px;top:45.37px;font-size:12.60px;line-height:16px;color:#3a3a3a;letter-spacing:-0.352px;-webkit-text-stroke-width:0.60px;">Debug</div>
<div class="t" style="left:457.70px;top:45.37px;font-size:12.60px;line-height:16px;color:#3a3a3a;letter-spacing:-0.087px;-webkit-text-stroke-width:0.60px;">Profile</div>
<div class="t" style="left:513.50px;top:45.37px;font-size:12.60px;line-height:16px;color:#3a3a3a;letter-spacing:0.145px;-webkit-text-stroke-width:0.60px;">Tools</div>
<div class="t" style="left:564.10px;top:45.37px;font-size:12.60px;line-height:16px;color:#3a3a3a;letter-spacing:-0.298px;-webkit-text-stroke-width:0.60px;">Help</div>
<div class="t" style="left:289.50px;top:73.77px;font-size:11.80px;line-height:15px;color:#707070;letter-spacing:-0.184px;">Go to file/function</div>
<div class="t" style="left:500.00px;top:72.27px;font-size:12.00px;line-height:16px;color:#222;letter-spacing:-0.144px;">Addins</div>
<div class="t" style="left:33.30px;top:105.97px;font-size:12.00px;line-height:16px;color:#222;letter-spacing:0.017px;">pbmc3k_tutorial.Rmd</div>
<div class="t" style="left:197.00px;top:129.57px;font-size:12.00px;line-height:16px;color:#222;letter-spacing:0.100px;">Knit</div>
<div class="t" style="left:516.20px;top:129.57px;font-size:12.00px;line-height:16px;color:#222;">Insert</div>
<div class="t" style="left:647.00px;top:129.57px;font-size:12.00px;line-height:16px;color:#222;letter-spacing:-0.760px;">Run</div>
<div class="t" style="left:25.00px;top:735.77px;font-size:12.00px;line-height:16px;color:#555;letter-spacing:-0.840px;">1:1</div>
<div class="t" style="left:81.80px;top:735.77px;font-size:12.00px;line-height:16px;color:#555;letter-spacing:-0.057px;">Seurat – Guided Clustering Tutorial</div>
<div class="t" style="left:678.50px;top:735.77px;font-size:12.00px;line-height:16px;color:#555;letter-spacing:-0.342px;">R Markdown</div>
<div class="t" style="left:14.50px;top:763.77px;font-size:12.50px;line-height:16px;color:#222;font-weight:bold;letter-spacing:-0.802px;">Console</div>
<div class="t" style="left:78.80px;top:763.77px;font-size:12.50px;line-height:16px;color:#222;font-weight:bold;letter-spacing:-0.384px;">Terminal</div>
<div class="t" style="left:159.70px;top:763.77px;font-size:12.50px;line-height:16px;color:#222;font-weight:bold;letter-spacing:-1.629px;">Jobs</div>
<div class="t" style="left:18.20px;top:787.47px;font-size:12.00px;line-height:16px;color:#8a8a8a;font-weight:bold;letter-spacing:0.293px;">~/capsule/code/</div>
<div class="t" style="left:778.60px;top:105.27px;font-size:12.50px;line-height:16px;color:#222;font-weight:bold;letter-spacing:-0.608px;">Environment</div>
<div class="t" style="left:868.20px;top:105.27px;font-size:12.50px;line-height:16px;color:#222;font-weight:bold;letter-spacing:-0.377px;">History</div>
<div class="t" style="left:927.50px;top:105.27px;font-size:12.50px;line-height:16px;color:#222;font-weight:bold;letter-spacing:-0.689px;">Connections</div>
<div class="t" style="left:1015.20px;top:105.27px;font-size:12.50px;line-height:16px;color:#222;font-weight:bold;letter-spacing:-0.587px;">Git</div>
<div class="t" style="left:851.00px;top:128.77px;font-size:12.00px;line-height:16px;color:#222;letter-spacing:-0.055px;">Import Dataset</div>
<div class="t" style="left:797.00px;top:151.77px;font-size:12.00px;line-height:16px;color:#222;letter-spacing:-0.142px;">Global Environment</div>
<div class="t" style="left:778.40px;top:381.97px;font-size:12.50px;line-height:16px;color:#222;font-weight:bold;letter-spacing:-0.775px;">Files</div>
<div class="t" style="left:822.70px;top:381.97px;font-size:12.50px;line-height:16px;color:#222;font-weight:bold;letter-spacing:-0.866px;">Plots</div>
<div class="t" style="left:869.60px;top:381.97px;font-size:12.50px;line-height:16px;color:#222;font-weight:bold;letter-spacing:-1.012px;">Packages</div>
<div class="t" style="left:940.00px;top:381.97px;font-size:12.50px;line-height:16px;color:#222;font-weight:bold;letter-spacing:-0.554px;">Help</div>
<div class="t" style="left:984.60px;top:381.97px;font-size:12.50px;line-height:16px;color:#222;font-weight:bold;letter-spacing:-0.533px;">Viewer</div>
<div class="t" style="left:796.70px;top:405.77px;font-size:12.00px;line-height:16px;color:#222;letter-spacing:-0.287px;">New Folder</div>
<div class="t" style="left:892.00px;top:405.77px;font-size:12.00px;line-height:16px;color:#222;letter-spacing:-0.208px;">Upload</div>
<div class="t" style="left:966.00px;top:405.77px;font-size:12.00px;line-height:16px;color:#222;letter-spacing:-0.336px;">Delete</div>
<div class="t" style="left:1029.00px;top:405.77px;font-size:12.00px;line-height:16px;color:#222;letter-spacing:-0.772px;">Rename</div>
<div class="t" style="left:1107.30px;top:405.77px;font-size:12.00px;line-height:16px;color:#222;letter-spacing:-0.220px;">More</div>
<div class="t" style="left:818.00px;top:428.27px;font-size:12.00px;line-height:16px;color:#3355cc;letter-spacing:-0.680px;">Home</div>
<div class="t" style="left:865.00px;top:428.27px;font-size:12.00px;line-height:16px;color:#3355cc;letter-spacing:-0.390px;">capsule</div>
<div class="t" style="left:922.00px;top:428.27px;font-size:12.00px;line-height:16px;color:#3355cc;letter-spacing:-0.347px;">code</div>
<div class="t" style="left:843.00px;top:448.37px;font-size:12.00px;line-height:16px;color:#555;letter-spacing:-0.680px;">Name</div>
</div>
<div style="position:absolute;left:6px;top:147px;width:754px;height:587px;overflow:hidden">
<div style="position:absolute;left:-6px;top:-147px;width:1283px;height:920px;">
<div class="t" style="left:26.00px;top:143.06px;font-size:13.60px;line-height:18px;letter-spacing:-1.040px;font-family:'Liberation Mono',monospace;"><span style="color:#555">271</span></div>
<div class="t" style="left:26.00px;top:160.66px;font-size:13.60px;line-height:18px;letter-spacing:-1.040px;font-family:'Liberation Mono',monospace;"><span style="color:#555">272</span></div>
<div class="t" style="left:26.00px;top:196.56px;font-size:13.60px;line-height:18px;letter-spacing:-1.040px;font-family:'Liberation Mono',monospace;"><span style="color:#555">273</span></div>
<div class="t" style="left:26.00px;top:214.06px;font-size:13.60px;line-height:18px;letter-spacing:-1.040px;font-family:'Liberation Mono',monospace;"><span style="color:#555">274</span></div>
<div class="t" style="left:49.00px;top:144.87px;font-size:9.00px;line-height:12px;letter-spacing:0.600px;font-family:'Liberation Mono',monospace;"><span style="color:#666">▾</span></div>
<div class="t" style="left:63.30px;top:143.06px;font-size:13.60px;line-height:18px;letter-spacing:-1.040px;font-family:'Liberation Mono',monospace;"><span style="color:#3e4a6e">   {r tsneplot, fig.height=5, fig.width=7}</span></div>
<div class="t" style="left:63.30px;top:160.66px;font-size:13.60px;line-height:18px;letter-spacing:-1.040px;font-family:'Liberation Mono',monospace;"><span style="color:#5a8a6a"># note that you can set `label = TRUE` or use the LabelClusters function to help label individual</span></div>
<div class="t" style="left:63.30px;top:178.76px;font-size:13.60px;line-height:18px;letter-spacing:-1.040px;font-family:'Liberation Mono',monospace;"><span style="color:#5a8a6a">clusters</span></div>
<div class="t" style="left:63.30px;top:196.56px;font-size:13.60px;line-height:18px;letter-spacing:-1.040px;font-family:'Liberation Mono',monospace;"><span style="color:#222">DimPlot</span><span style="color:#8a93b0">(</span><span style="color:#222">object </span><span style="color:#8a93b0">=</span><span style="color:#222"> pbmc, reduction </span><span style="color:#8a93b0">=</span><span style="color:#222"> </span><span style="color:#3a8a3a">&#x27;umap&#x27;</span><span style="color:#8a93b0">)</span></div>
<div class="t" style="left:63.30px;top:214.06px;font-size:13.60px;line-height:18px;letter-spacing:-1.040px;font-family:'Liberation Mono',monospace;"><span style="color:#3e4a6e">```</span></div>
</div></div>
<div class="t" style="left:10.50px;top:808.66px;font-size:13.60px;line-height:18px;letter-spacing:-1.040px;font-family:'Liberation Mono',monospace;"><span style="color:#1d24e8">+   theme(axis.title = element_text(size = 18), legend.text = element_text(size = 18)) +</span></div>
<div class="t" style="left:10.50px;top:826.86px;font-size:13.60px;line-height:18px;letter-spacing:-1.040px;font-family:'Liberation Mono',monospace;"><span style="color:#1d24e8">+   guides(colour = guide_legend(override.aes = list(size = 10)))</span></div>
<div class="t" style="left:10.50px;top:844.86px;font-size:13.60px;line-height:18px;letter-spacing:-1.040px;font-family:'Liberation Mono',monospace;"><span style="color:#1d24e8">&gt; ggsave(filename = &quot;../results/pbmc3k_umap.png&quot;, height = 7, width = 12, plot = plot)</span></div>
<div class="t" style="left:10.50px;top:862.86px;font-size:13.60px;line-height:18px;letter-spacing:-1.040px;font-family:'Liberation Mono',monospace;"><span style="color:#1d24e8">&gt; saveRDS(pbmc, file = &quot;../results/pbmc3k_final.rds&quot;)</span></div>
<div class="t" style="left:10.50px;top:880.86px;font-size:13.60px;line-height:18px;letter-spacing:-1.040px;font-family:'Liberation Mono',monospace;"><span style="color:#1d24e8">&gt; </span></div>
<div class="r" style="left:25.00px;top:880.50px;width:1.50px;height:16.50px;background:#aaaaaa;"></div>
<div style="position:absolute;left:0;top:0;width:1283px;height:918.5px;overflow:hidden">
<div class="t" style="left:789.00px;top:176.41px;font-size:13.60px;line-height:18px;letter-spacing:-1.040px;font-family:'Liberation Mono',monospace;"><span style="color:#222">pbmc</span></div>
<div class="t" style="left:1041.00px;top:176.41px;font-size:13.60px;line-height:18px;letter-spacing:-1.040px;font-family:'Liberation Mono',monospace;"><span style="color:#222">Large Seurat (339.9 Mb)</span></div>
<div class="t" style="left:789.00px;top:198.16px;font-size:13.60px;line-height:18px;letter-spacing:-1.040px;font-family:'Liberation Mono',monospace;"><span style="color:#222">pbmc.data</span></div>
<div class="t" style="left:1041.00px;top:198.16px;font-size:13.60px;line-height:18px;letter-spacing:-1.040px;font-family:'Liberation Mono',monospace;"><span style="color:#222">Large dgCMatrix (28.5 Mb)</span></div>
<div class="t" style="left:789.00px;top:220.01px;font-size:13.60px;line-height:18px;letter-spacing:-1.040px;font-family:'Liberation Mono',monospace;"><span style="color:#222">pbmc.markers</span></div>
<div class="t" style="left:1041.00px;top:220.01px;font-size:13.60px;line-height:18px;letter-spacing:-1.040px;font-family:'Liberation Mono',monospace;"><span style="color:#222">2304 obs. of 7 variables</span></div>
<div class="t" style="left:789.00px;top:241.91px;font-size:13.60px;line-height:18px;letter-spacing:-1.040px;font-family:'Liberation Mono',monospace;"><span style="color:#222">plot</span></div>
<div class="t" style="left:1041.00px;top:241.91px;font-size:13.60px;line-height:18px;letter-spacing:-1.040px;font-family:'Liberation Mono',monospace;"><span style="color:#222">List of 11</span></div>
<div class="t" style="left:789.00px;top:264.16px;font-size:13.60px;line-height:18px;letter-spacing:-1.040px;font-family:'Liberation Mono',monospace;"><span style="color:#222">plot1</span></div>
<div class="t" style="left:1041.00px;top:264.16px;font-size:13.60px;line-height:18px;letter-spacing:-1.040px;font-family:'Liberation Mono',monospace;"><span style="color:#222">Large gg (9 elements, 1.2 Mb)</span></div>
<div class="t" style="left:789.00px;top:286.36px;font-size:13.60px;line-height:18px;letter-spacing:-1.040px;font-family:'Liberation Mono',monospace;"><span style="color:#222">plot2</span></div>
<div class="t" style="left:1041.00px;top:286.36px;font-size:13.60px;line-height:18px;letter-spacing:-1.040px;font-family:'Liberation Mono',monospace;"><span style="color:#222">Large gg (9 elements, 1.2 Mb)</span></div>
<div class="t" style="left:789.00px;top:308.26px;font-size:13.60px;line-height:18px;letter-spacing:-1.040px;font-family:'Liberation Mono',monospace;"><span style="color:#222">top10</span></div>
<div class="t" style="left:1041.00px;top:308.26px;font-size:13.60px;line-height:18px;letter-spacing:-1.040px;font-family:'Liberation Mono',monospace;"><span style="color:#222">90 obs. of 7 variables</span></div>
<div class="t" style="left:773.00px;top:330.16px;font-size:13.60px;line-height:18px;letter-spacing:-1.040px;font-family:'Liberation Mono',monospace;"><span style="color:#222">Values</span></div>
<div class="t" style="left:789.00px;top:351.36px;font-size:13.60px;line-height:18px;letter-spacing:-1.040px;font-family:'Liberation Mono',monospace;"><span style="color:#222">all.genes</span></div>
<div class="t" style="left:1041.00px;top:351.36px;font-size:13.60px;line-height:18px;letter-spacing:-1.040px;font-family:'Liberation Mono',monospace;"><span style="color:#222">Large character (13714 elements, 820.5 Kb)</span></div>
<div class="t" style="left:828.00px;top:471.57px;font-size:12.00px;line-height:16px;color:#2434b4;">..</div>
<div class="t" style="left:827.80px;top:494.17px;font-size:12.00px;line-height:16px;color:#2434b4;letter-spacing:0.318px;">capsule.Rproj</div>
<div class="t" style="left:827.80px;top:517.37px;font-size:12.00px;line-height:16px;color:#2434b4;letter-spacing:-1.027px;">LICENSE</div>
<div class="t" style="left:827.80px;top:540.27px;font-size:12.00px;line-height:16px;color:#2434b4;letter-spacing:0.668px;">pbmc3k_tutorial.html</div>
<div class="t" style="left:827.80px;top:563.47px;font-size:12.00px;line-height:16px;color:#2434b4;letter-spacing:0.544px;">pbmc3k_tutorial.Rmd</div>
<div class="t" style="left:827.80px;top:586.77px;font-size:12.00px;line-height:16px;color:#2434b4;letter-spacing:0.630px;">run</div>
<div class="t" style="left:827.80px;top:609.77px;font-size:12.00px;line-height:16px;color:#2434b4;letter-spacing:0.383px;">Using sctransform in Seurat.Rmd</div>
</div>
</body></html>
